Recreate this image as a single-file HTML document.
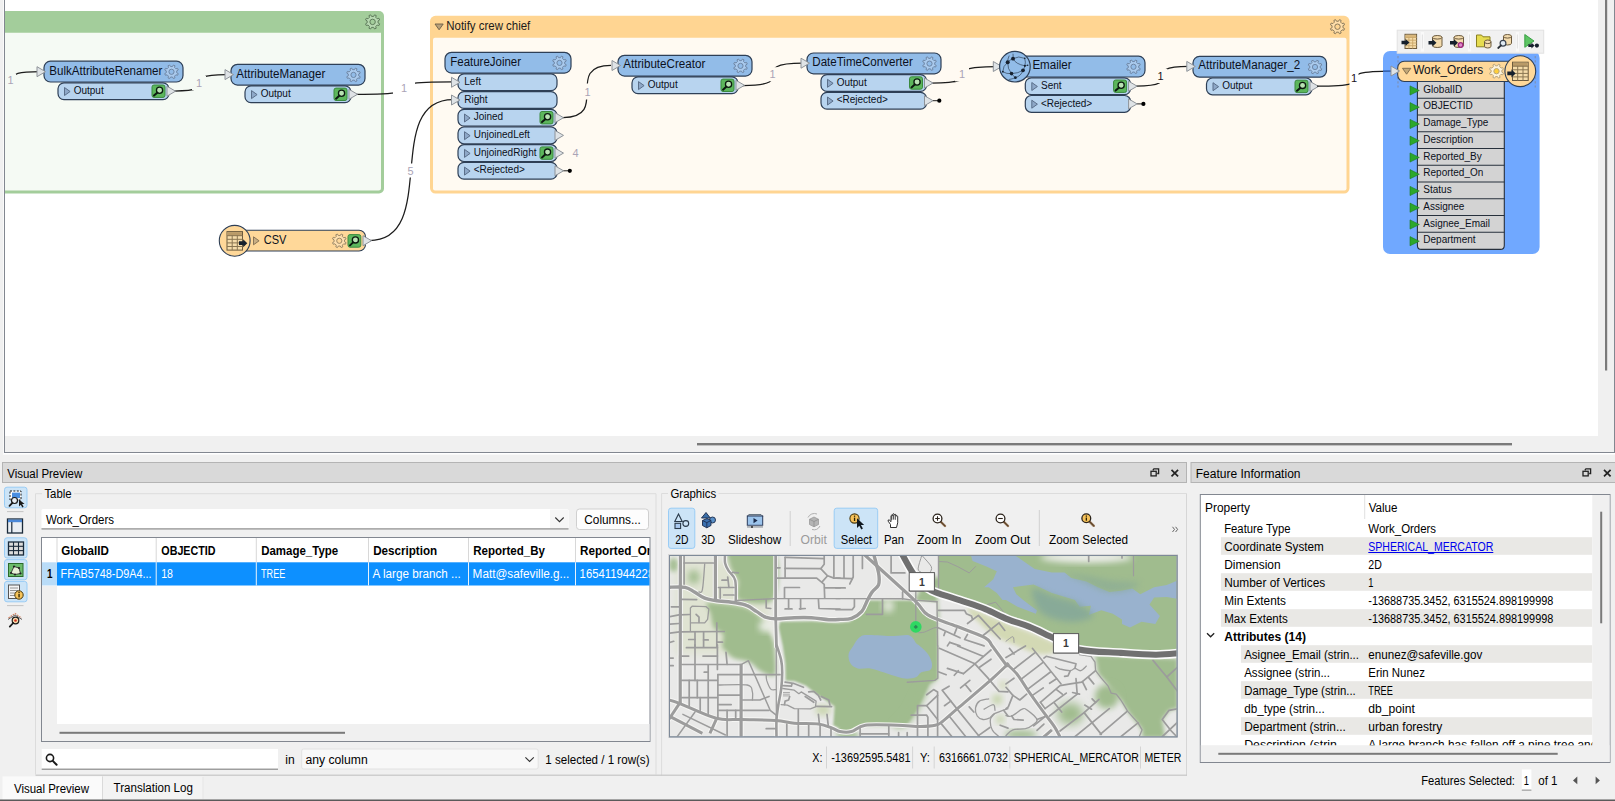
<!DOCTYPE html><html><head><meta charset="utf-8"><title>FME Workbench</title>
<style>html,body{margin:0;padding:0;background:#f0f0f0;overflow:hidden}svg{display:block}text{font-family:"Liberation Sans",sans-serif;white-space:pre}</style></head><body>
<svg width="1615" height="801" viewBox="0 0 1615 801" font-family='"Liberation Sans", sans-serif'>
<defs><clipPath id="cv"><rect x="5" y="0" width="1593" height="436"/></clipPath></defs>
<rect x="0" y="0" width="1615" height="801" fill="#f0f0f0"/>
<rect x="5" y="0" width="1593" height="436" fill="#ffffff"/>
<rect x="4" y="0" width="1" height="453" fill="#828790"/>
<rect x="4" y="452" width="1611" height="1" fill="#828790"/>
<rect x="1614" y="0" width="1" height="453" fill="#828790"/>
<rect x="3" y="453" width="1612" height="1.6" fill="#ffffff"/>
<rect x="3" y="0" width="1" height="454" fill="#fafafa"/>
<rect x="697" y="443" width="815" height="2.4" fill="#7a7a7a"/>
<rect x="1605" y="0" width="2.2" height="370.5" fill="#7a7a7a"/>
<g clip-path="url(#cv)">
<rect x="-20" y="11" width="404" height="182.5" rx="5" fill="#a3cd9b"/>
<path d="M5,32.7 H381 V188 Q381,190.5 378.5,190.5 H5Z" fill="#f5faf4"/>
<path d="M379.64,23.83 L378.94,25.52 L377.16,25.05 L375.75,26.46 L376.22,28.24 L374.53,28.94 L373.60,27.36 L371.60,27.36 L370.67,28.94 L368.98,28.24 L369.45,26.46 L368.04,25.05 L366.26,25.52 L365.56,23.83 L367.14,22.90 L367.14,20.90 L365.56,19.97 L366.26,18.28 L368.04,18.75 L369.45,17.34 L368.98,15.56 L370.67,14.86 L371.60,16.44 L373.60,16.44 L374.53,14.86 L376.22,15.56 L375.75,17.34 L377.16,18.75 L378.94,18.28 L379.64,19.97 L378.06,20.90 L378.06,22.90Z M375.30,21.90 A2.70,2.70 0 1 0 369.90,21.90 A2.70,2.70 0 1 0 375.30,21.90Z" fill="rgba(255,255,255,0.22)" fill-rule="evenodd" stroke="#5f7d5c" stroke-width="1" stroke-linejoin="round"/>
<rect x="430" y="15.8" width="919.5" height="177.7" rx="5.5" fill="#ffd592"/>
<rect x="433" y="37.8" width="913.5" height="152.8" rx="2" fill="#fffaf2"/>
<path d="M435,24 L443.2,24 L439.1,29.8Z" fill="#b8a07a" stroke="#6b5c45" stroke-width="0.9" stroke-linejoin="round"/>
<text x="446.3" y="30" font-size="12" fill="#1a1a1a" textLength="84" lengthAdjust="spacingAndGlyphs" >Notify crew chief</text>
<path d="M1344.54,28.63 L1343.84,30.32 L1342.06,29.85 L1340.65,31.26 L1341.12,33.04 L1339.43,33.74 L1338.50,32.16 L1336.50,32.16 L1335.57,33.74 L1333.88,33.04 L1334.35,31.26 L1332.94,29.85 L1331.16,30.32 L1330.46,28.63 L1332.04,27.70 L1332.04,25.70 L1330.46,24.77 L1331.16,23.08 L1332.94,23.55 L1334.35,22.14 L1333.88,20.36 L1335.57,19.66 L1336.50,21.24 L1338.50,21.24 L1339.43,19.66 L1341.12,20.36 L1340.65,22.14 L1342.06,23.55 L1343.84,23.08 L1344.54,24.77 L1342.96,25.70 L1342.96,27.70Z M1340.20,26.70 A2.70,2.70 0 1 0 1334.80,26.70 A2.70,2.70 0 1 0 1340.20,26.70Z" fill="rgba(255,255,255,0.22)" fill-rule="evenodd" stroke="#8a7a5c" stroke-width="1" stroke-linejoin="round"/>
<path d="M-14,82 C34.6,82 -8.6,71.7 40,71.7" stroke="#1c1c1c" stroke-width="1.25" fill="none"/>
<rect x="5.0" y="73.5" width="11" height="13" fill="#f5faf4"/>
<text x="10.5" y="84" font-size="11" fill="#aaa4b6" text-anchor="middle" >1</text>
<path d="M174,91 C226.0,91 174.0,74.6 226,74.6" stroke="#1c1c1c" stroke-width="1.25" fill="none"/>
<rect x="192.0" y="76.0" width="14" height="14" fill="#f5faf4"/>
<text x="199" y="87" font-size="11" fill="#aaa4b6" text-anchor="middle" >1</text>
<path d="M356,94.4 C453.0,94.4 356.0,81.8 453,81.8" stroke="#1c1c1c" stroke-width="1.25" fill="none"/>
<rect x="393.0" y="81.3" width="22" height="14" fill="#ffffff"/>
<text x="404" y="92.3" font-size="11" fill="#aaa4b6" text-anchor="middle" >1</text>
<path d="M369,240.6 C440.4,240.6 381.6,99.5 453,99.5" stroke="#1c1c1c" stroke-width="1.25" fill="none"/>
<rect x="404.6" y="163.5" width="12" height="14" fill="#ffffff"/>
<text x="410.6" y="174.5" font-size="11" fill="#aaa4b6" text-anchor="middle" >5</text>
<path d="M563,117.5 C611.0,117.5 563.0,65.4 611,65.4" stroke="#1c1c1c" stroke-width="1.25" fill="none"/>
<rect x="582.5" y="83.5" width="10" height="16" fill="#fffaf2"/>
<text x="587.5" y="95.5" font-size="11" fill="#aaa4b6" text-anchor="middle" >1</text>
<path d="M743,85.5 C803.0,85.5 743.0,63.2 803,63.2" stroke="#1c1c1c" stroke-width="1.25" fill="none"/>
<rect x="765.5" y="67.2" width="14" height="14" fill="#fffaf2"/>
<text x="772.5" y="78.2" font-size="11" fill="#aaa4b6" text-anchor="middle" >1</text>
<path d="M931,83 C996.0,83 931.0,66.5 996,66.5" stroke="#1c1c1c" stroke-width="1.25" fill="none"/>
<rect x="955.0" y="67.3" width="14" height="14" fill="#fffaf2"/>
<text x="962" y="78.3" font-size="11" fill="#aaa4b6" text-anchor="middle" >1</text>
<path d="M1136,86 C1189.0,86 1136.0,66.4 1189,66.4" stroke="#1c1c1c" stroke-width="1.25" fill="none"/>
<rect x="1153.5" y="69.0" width="14" height="14" fill="#fffaf2"/>
<text x="1160.5" y="80" font-size="11" fill="#1a1020" text-anchor="middle" >1</text>
<rect x="58" y="82.80" width="111" height="16.8" rx="6" fill="#b8d4ef" stroke="#2e3f56" stroke-width="1.2"/>
<path d="M64.5,87.5 L70.1,91.5 L64.5,95.5Z" fill="#8ea8c8" stroke="#5b6f8a" stroke-width="1" stroke-linejoin="round"/>
<text x="73.7" y="93.8" font-size="10" fill="#0b1020" >Output</text>
<rect x="152" y="85.0" width="13" height="12.4" rx="2" fill="#5cb65c" stroke="#3b8a3f" stroke-width="1"/>
<circle cx="159.54" cy="90.21" r="3.1" fill="#b9e3b4" stroke="#0c1a10" stroke-width="1.3"/>
<line x1="157.24" y1="92.71" x2="154.00" y2="95.60" stroke="#0c1a10" stroke-width="2" stroke-linecap="round"/>
<path d="M167,86.2 L175.5,91.2 L167,96.2Z" fill="#dfe3e6" stroke="#8e9399" stroke-width="1" stroke-linejoin="round"/>
<rect x="44" y="61.2" width="139" height="20.8" rx="6.5" fill="#92bce8" stroke="#2e3f56" stroke-width="1.2"/>
<text x="49.3" y="74.8" font-size="12" fill="#0b1020" textLength="113" lengthAdjust="spacingAndGlyphs" >BulkAttributeRenamer</text>
<path d="M178.25,73.65 L177.58,75.27 L175.88,74.82 L174.52,76.18 L174.97,77.88 L173.35,78.55 L172.46,77.03 L170.54,77.03 L169.65,78.55 L168.03,77.88 L168.48,76.18 L167.12,74.82 L165.42,75.27 L164.75,73.65 L166.27,72.76 L166.27,70.84 L164.75,69.95 L165.42,68.33 L167.12,68.78 L168.48,67.42 L168.03,65.72 L169.65,65.05 L170.54,66.57 L172.46,66.57 L173.35,65.05 L174.97,65.72 L174.52,67.42 L175.88,68.78 L177.58,68.33 L178.25,69.95 L176.73,70.84 L176.73,72.76Z M174.09,71.80 A2.59,2.59 0 1 0 168.91,71.80 A2.59,2.59 0 1 0 174.09,71.80Z" fill="rgba(255,255,255,0.22)" fill-rule="evenodd" stroke="#6f87a6" stroke-width="1" stroke-linejoin="round"/>
<path d="M37,66.7 L45.5,71.7 L37,76.7Z" fill="#dfe3e6" stroke="#8e9399" stroke-width="1" stroke-linejoin="round"/>
<rect x="245" y="85.90" width="106" height="16.8" rx="6" fill="#b8d4ef" stroke="#2e3f56" stroke-width="1.2"/>
<path d="M251.5,90.6 L257.1,94.6 L251.5,98.6Z" fill="#8ea8c8" stroke="#5b6f8a" stroke-width="1" stroke-linejoin="round"/>
<text x="260.7" y="96.9" font-size="10" fill="#0b1020" >Output</text>
<rect x="334" y="88.1" width="13" height="12.4" rx="2" fill="#5cb65c" stroke="#3b8a3f" stroke-width="1"/>
<circle cx="341.54" cy="93.31" r="3.1" fill="#b9e3b4" stroke="#0c1a10" stroke-width="1.3"/>
<line x1="339.24" y1="95.81" x2="336.00" y2="98.70" stroke="#0c1a10" stroke-width="2" stroke-linecap="round"/>
<path d="M349,89.3 L357.5,94.3 L349,99.3Z" fill="#dfe3e6" stroke="#8e9399" stroke-width="1" stroke-linejoin="round"/>
<rect x="231" y="64.3" width="134" height="20.8" rx="6.5" fill="#92bce8" stroke="#2e3f56" stroke-width="1.2"/>
<text x="236.3" y="77.8" font-size="12" fill="#0b1020" textLength="89" lengthAdjust="spacingAndGlyphs" >AttributeManager</text>
<path d="M360.25,76.75 L359.58,78.37 L357.88,77.92 L356.52,79.28 L356.97,80.98 L355.35,81.65 L354.46,80.13 L352.54,80.13 L351.65,81.65 L350.03,80.98 L350.48,79.28 L349.12,77.92 L347.42,78.37 L346.75,76.75 L348.27,75.86 L348.27,73.94 L346.75,73.05 L347.42,71.43 L349.12,71.88 L350.48,70.52 L350.03,68.82 L351.65,68.15 L352.54,69.67 L354.46,69.67 L355.35,68.15 L356.97,68.82 L356.52,70.52 L357.88,71.88 L359.58,71.43 L360.25,73.05 L358.73,73.94 L358.73,75.86Z M356.09,74.90 A2.59,2.59 0 1 0 350.91,74.90 A2.59,2.59 0 1 0 356.09,74.90Z" fill="rgba(255,255,255,0.22)" fill-rule="evenodd" stroke="#6f87a6" stroke-width="1" stroke-linejoin="round"/>
<path d="M225,69.6 L233.5,74.6 L225,79.6Z" fill="#dfe3e6" stroke="#8e9399" stroke-width="1" stroke-linejoin="round"/>
<rect x="458" y="73.90" width="99" height="16.8" rx="6" fill="#b8d4ef" stroke="#2e3f56" stroke-width="1.2"/>
<text x="464.3" y="85.0" font-size="10" fill="#0b1020" >Left</text>
<path d="M451.5,77.3 L460.0,82.3 L451.5,87.3Z" fill="#dfe3e6" stroke="#8e9399" stroke-width="1" stroke-linejoin="round"/>
<rect x="458" y="91.60" width="99" height="16.8" rx="6" fill="#b8d4ef" stroke="#2e3f56" stroke-width="1.2"/>
<text x="464.3" y="102.7" font-size="10" fill="#0b1020" >Right</text>
<path d="M451.5,95.0 L460.0,100.0 L451.5,105.0Z" fill="#dfe3e6" stroke="#8e9399" stroke-width="1" stroke-linejoin="round"/>
<rect x="458" y="109.30" width="99" height="16.8" rx="6" fill="#b8d4ef" stroke="#2e3f56" stroke-width="1.2"/>
<path d="M464.5,113.99999999999999 L470.1,117.99999999999999 L464.5,121.99999999999999Z" fill="#8ea8c8" stroke="#5b6f8a" stroke-width="1" stroke-linejoin="round"/>
<text x="473.7" y="120.3" font-size="10" fill="#0b1020" >Joined</text>
<rect x="540" y="111.49999999999999" width="13" height="12.4" rx="2" fill="#5cb65c" stroke="#3b8a3f" stroke-width="1"/>
<circle cx="547.54" cy="116.71" r="3.1" fill="#b9e3b4" stroke="#0c1a10" stroke-width="1.3"/>
<line x1="545.24" y1="119.21" x2="542.00" y2="122.10" stroke="#0c1a10" stroke-width="2" stroke-linecap="round"/>
<path d="M555,112.69999999999999 L563.5,117.69999999999999 L555,122.69999999999999Z" fill="#dfe3e6" stroke="#8e9399" stroke-width="1" stroke-linejoin="round"/>
<rect x="458" y="127.00" width="99" height="16.8" rx="6" fill="#b8d4ef" stroke="#2e3f56" stroke-width="1.2"/>
<path d="M464.5,131.7 L470.1,135.7 L464.5,139.7Z" fill="#8ea8c8" stroke="#5b6f8a" stroke-width="1" stroke-linejoin="round"/>
<text x="473.7" y="138.0" font-size="10" fill="#0b1020" >UnjoinedLeft</text>
<path d="M555,130.39999999999998 L563.5,135.39999999999998 L555,140.39999999999998Z" fill="#dfe3e6" stroke="#8e9399" stroke-width="1" stroke-linejoin="round"/>
<rect x="458" y="144.70" width="99" height="16.8" rx="6" fill="#b8d4ef" stroke="#2e3f56" stroke-width="1.2"/>
<path d="M464.5,149.4 L470.1,153.4 L464.5,157.4Z" fill="#8ea8c8" stroke="#5b6f8a" stroke-width="1" stroke-linejoin="round"/>
<text x="473.7" y="155.7" font-size="10" fill="#0b1020" >UnjoinedRight</text>
<rect x="540" y="146.89999999999998" width="13" height="12.4" rx="2" fill="#5cb65c" stroke="#3b8a3f" stroke-width="1"/>
<circle cx="547.54" cy="152.11" r="3.1" fill="#b9e3b4" stroke="#0c1a10" stroke-width="1.3"/>
<line x1="545.24" y1="154.61" x2="542.00" y2="157.50" stroke="#0c1a10" stroke-width="2" stroke-linecap="round"/>
<path d="M555,148.1 L563.5,153.1 L555,158.1Z" fill="#dfe3e6" stroke="#8e9399" stroke-width="1" stroke-linejoin="round"/>
<rect x="458" y="162.40" width="99" height="16.8" rx="6" fill="#b8d4ef" stroke="#2e3f56" stroke-width="1.2"/>
<path d="M464.5,167.1 L470.1,171.1 L464.5,175.1Z" fill="#8ea8c8" stroke="#5b6f8a" stroke-width="1" stroke-linejoin="round"/>
<text x="473.7" y="173.4" font-size="10" fill="#0b1020" >&lt;Rejected&gt;</text>
<path d="M555,165.79999999999998 L563.5,170.79999999999998 L555,175.79999999999998Z" fill="#dfe3e6" stroke="#8e9399" stroke-width="1" stroke-linejoin="round"/>
<line x1="563.5" y1="170.79999999999998" x2="568.5" y2="170.79999999999998" stroke="#222" stroke-width="1"/>
<circle cx="569.8" cy="170.79999999999998" r="2.1" fill="#000"/>
<rect x="445" y="52.3" width="126" height="20.8" rx="6.5" fill="#92bce8" stroke="#2e3f56" stroke-width="1.2"/>
<text x="450.3" y="65.9" font-size="12" fill="#0b1020" textLength="70.7" lengthAdjust="spacingAndGlyphs" >FeatureJoiner</text>
<path d="M566.25,64.75 L565.58,66.37 L563.88,65.92 L562.52,67.28 L562.97,68.98 L561.35,69.65 L560.46,68.13 L558.54,68.13 L557.65,69.65 L556.03,68.98 L556.48,67.28 L555.12,65.92 L553.42,66.37 L552.75,64.75 L554.27,63.86 L554.27,61.94 L552.75,61.05 L553.42,59.43 L555.12,59.88 L556.48,58.52 L556.03,56.82 L557.65,56.15 L558.54,57.67 L560.46,57.67 L561.35,56.15 L562.97,56.82 L562.52,58.52 L563.88,59.88 L565.58,59.43 L566.25,61.05 L564.73,61.94 L564.73,63.86Z M562.09,62.90 A2.59,2.59 0 1 0 556.91,62.90 A2.59,2.59 0 1 0 562.09,62.90Z" fill="rgba(255,255,255,0.22)" fill-rule="evenodd" stroke="#6f87a6" stroke-width="1" stroke-linejoin="round"/>
<text x="575.5" y="157.3" font-size="11" fill="#aaa4b6" text-anchor="middle" >4</text>
<rect x="632" y="76.90" width="106" height="16.8" rx="6" fill="#b8d4ef" stroke="#2e3f56" stroke-width="1.2"/>
<path d="M638.5,81.6 L644.1,85.6 L638.5,89.6Z" fill="#8ea8c8" stroke="#5b6f8a" stroke-width="1" stroke-linejoin="round"/>
<text x="647.7" y="87.9" font-size="10" fill="#0b1020" >Output</text>
<rect x="721" y="79.1" width="13" height="12.4" rx="2" fill="#5cb65c" stroke="#3b8a3f" stroke-width="1"/>
<circle cx="728.54" cy="84.31" r="3.1" fill="#b9e3b4" stroke="#0c1a10" stroke-width="1.3"/>
<line x1="726.24" y1="86.81" x2="723.00" y2="89.70" stroke="#0c1a10" stroke-width="2" stroke-linecap="round"/>
<path d="M736,80.3 L744.5,85.3 L736,90.3Z" fill="#dfe3e6" stroke="#8e9399" stroke-width="1" stroke-linejoin="round"/>
<rect x="618" y="55.3" width="134" height="20.8" rx="6.5" fill="#92bce8" stroke="#2e3f56" stroke-width="1.2"/>
<text x="623.3" y="67.8" font-size="12" fill="#0b1020" textLength="82" lengthAdjust="spacingAndGlyphs" >AttributeCreator</text>
<path d="M747.25,67.75 L746.58,69.37 L744.88,68.92 L743.52,70.28 L743.97,71.98 L742.35,72.65 L741.46,71.13 L739.54,71.13 L738.65,72.65 L737.03,71.98 L737.48,70.28 L736.12,68.92 L734.42,69.37 L733.75,67.75 L735.27,66.86 L735.27,64.94 L733.75,64.05 L734.42,62.43 L736.12,62.88 L737.48,61.52 L737.03,59.82 L738.65,59.15 L739.54,60.67 L741.46,60.67 L742.35,59.15 L743.97,59.82 L743.52,61.52 L744.88,62.88 L746.58,62.43 L747.25,64.05 L745.73,64.94 L745.73,66.86Z M743.09,65.90 A2.59,2.59 0 1 0 737.91,65.90 A2.59,2.59 0 1 0 743.09,65.90Z" fill="rgba(255,255,255,0.22)" fill-rule="evenodd" stroke="#6f87a6" stroke-width="1" stroke-linejoin="round"/>
<path d="M612,60.5 L620.5,65.5 L612,70.5Z" fill="#dfe3e6" stroke="#8e9399" stroke-width="1" stroke-linejoin="round"/>
<rect x="821" y="74.60" width="105.5" height="16.8" rx="6" fill="#b8d4ef" stroke="#2e3f56" stroke-width="1.2"/>
<path d="M827.5,79.3 L833.1,83.3 L827.5,87.3Z" fill="#8ea8c8" stroke="#5b6f8a" stroke-width="1" stroke-linejoin="round"/>
<text x="836.7" y="85.6" font-size="10" fill="#0b1020" >Output</text>
<rect x="909.5" y="76.8" width="13" height="12.4" rx="2" fill="#5cb65c" stroke="#3b8a3f" stroke-width="1"/>
<circle cx="917.04" cy="82.01" r="3.1" fill="#b9e3b4" stroke="#0c1a10" stroke-width="1.3"/>
<line x1="914.74" y1="84.51" x2="911.50" y2="87.40" stroke="#0c1a10" stroke-width="2" stroke-linecap="round"/>
<path d="M924.5,78.0 L933.0,83.0 L924.5,88.0Z" fill="#dfe3e6" stroke="#8e9399" stroke-width="1" stroke-linejoin="round"/>
<rect x="821" y="92.30" width="105.5" height="16.8" rx="6" fill="#b8d4ef" stroke="#2e3f56" stroke-width="1.2"/>
<path d="M827.5,97.0 L833.1,101.0 L827.5,105.0Z" fill="#8ea8c8" stroke="#5b6f8a" stroke-width="1" stroke-linejoin="round"/>
<text x="836.7" y="103.3" font-size="10" fill="#0b1020" >&lt;Rejected&gt;</text>
<path d="M924.5,95.7 L933.0,100.7 L924.5,105.7Z" fill="#dfe3e6" stroke="#8e9399" stroke-width="1" stroke-linejoin="round"/>
<line x1="933.0" y1="100.7" x2="938.0" y2="100.7" stroke="#222" stroke-width="1"/>
<circle cx="939.3" cy="100.7" r="2.1" fill="#000"/>
<rect x="807" y="53" width="134" height="20.8" rx="6.5" fill="#92bce8" stroke="#2e3f56" stroke-width="1.2"/>
<text x="812.3" y="65.9" font-size="12" fill="#0b1020" textLength="100.5" lengthAdjust="spacingAndGlyphs" >DateTimeConverter</text>
<path d="M936.25,65.45 L935.58,67.07 L933.88,66.62 L932.52,67.98 L932.97,69.68 L931.35,70.35 L930.46,68.83 L928.54,68.83 L927.65,70.35 L926.03,69.68 L926.48,67.98 L925.12,66.62 L923.42,67.07 L922.75,65.45 L924.27,64.56 L924.27,62.64 L922.75,61.75 L923.42,60.13 L925.12,60.58 L926.48,59.22 L926.03,57.52 L927.65,56.85 L928.54,58.37 L930.46,58.37 L931.35,56.85 L932.97,57.52 L932.52,59.22 L933.88,60.58 L935.58,60.13 L936.25,61.75 L934.73,62.64 L934.73,64.56Z M932.09,63.60 A2.59,2.59 0 1 0 926.91,63.60 A2.59,2.59 0 1 0 932.09,63.60Z" fill="rgba(255,255,255,0.22)" fill-rule="evenodd" stroke="#6f87a6" stroke-width="1" stroke-linejoin="round"/>
<path d="M801,58.2 L809.5,63.2 L801,68.2Z" fill="#dfe3e6" stroke="#8e9399" stroke-width="1" stroke-linejoin="round"/>
<path d="M993.3,61.5 L1001.8,66.5 L993.3,71.5Z" fill="#dfe3e6" stroke="#8e9399" stroke-width="1" stroke-linejoin="round"/>
<rect x="1025.3" y="77.80" width="105.3" height="16.8" rx="6" fill="#b8d4ef" stroke="#2e3f56" stroke-width="1.2"/>
<path d="M1031.8,82.5 L1037.3999999999999,86.5 L1031.8,90.5Z" fill="#8ea8c8" stroke="#5b6f8a" stroke-width="1" stroke-linejoin="round"/>
<text x="1041.0" y="88.8" font-size="10" fill="#0b1020" >Sent</text>
<rect x="1113.6" y="80.0" width="13" height="12.4" rx="2" fill="#5cb65c" stroke="#3b8a3f" stroke-width="1"/>
<circle cx="1121.14" cy="85.21" r="3.1" fill="#b9e3b4" stroke="#0c1a10" stroke-width="1.3"/>
<line x1="1118.84" y1="87.71" x2="1115.60" y2="90.60" stroke="#0c1a10" stroke-width="2" stroke-linecap="round"/>
<path d="M1128.6,81.2 L1137.1,86.2 L1128.6,91.2Z" fill="#dfe3e6" stroke="#8e9399" stroke-width="1" stroke-linejoin="round"/>
<rect x="1025.3" y="95.50" width="105.3" height="16.8" rx="6" fill="#b8d4ef" stroke="#2e3f56" stroke-width="1.2"/>
<path d="M1031.8,100.2 L1037.3999999999999,104.2 L1031.8,108.2Z" fill="#8ea8c8" stroke="#5b6f8a" stroke-width="1" stroke-linejoin="round"/>
<text x="1041.0" y="106.5" font-size="10" fill="#0b1020" >&lt;Rejected&gt;</text>
<path d="M1128.6,98.9 L1137.1,103.9 L1128.6,108.9Z" fill="#dfe3e6" stroke="#8e9399" stroke-width="1" stroke-linejoin="round"/>
<line x1="1137.1" y1="103.9" x2="1142.1" y2="103.9" stroke="#222" stroke-width="1"/>
<circle cx="1143.3999999999999" cy="103.9" r="2.1" fill="#000"/>
<rect x="1003" y="56.2" width="142" height="20.8" rx="6.5" fill="#92bce8" stroke="#2e3f56" stroke-width="1.2"/>
<circle cx="1014.9" cy="66.7" r="15.3" fill="#92bce8" stroke="#2e3f56" stroke-width="1.2"/>
<text x="1032.4" y="68.8" font-size="12" fill="#0b1020" textLength="39.3" lengthAdjust="spacingAndGlyphs" >Emailer</text>
<path d="M1140.25,68.65 L1139.58,70.27 L1137.88,69.82 L1136.52,71.18 L1136.97,72.88 L1135.35,73.55 L1134.46,72.03 L1132.54,72.03 L1131.65,73.55 L1130.03,72.88 L1130.48,71.18 L1129.12,69.82 L1127.42,70.27 L1126.75,68.65 L1128.27,67.76 L1128.27,65.84 L1126.75,64.95 L1127.42,63.33 L1129.12,63.78 L1130.48,62.42 L1130.03,60.72 L1131.65,60.05 L1132.54,61.57 L1134.46,61.57 L1135.35,60.05 L1136.97,60.72 L1136.52,62.42 L1137.88,63.78 L1139.58,63.33 L1140.25,64.95 L1138.73,65.84 L1138.73,67.76Z M1136.09,66.80 A2.59,2.59 0 1 0 1130.91,66.80 A2.59,2.59 0 1 0 1136.09,66.80Z" fill="rgba(255,255,255,0.22)" fill-rule="evenodd" stroke="#6f87a6" stroke-width="1" stroke-linejoin="round"/>
<path d="M1013.03,58.67 Q1018.53,55.52 1024.79,58.34" stroke="#1b2738" stroke-width="0.75" fill="none" opacity="0.75"/>
<path d="M1013.03,58.67 Q1015.64,64.13 1024.89,65.79" stroke="#1b2738" stroke-width="0.75" fill="none" opacity="0.75"/>
<path d="M1024.79,58.34 Q1025.88,62.40 1024.89,65.79" stroke="#1b2738" stroke-width="0.75" fill="none" opacity="0.75"/>
<path d="M1007.71,62.23 Q1009.99,59.74 1013.03,58.67" stroke="#1b2738" stroke-width="0.75" fill="none" opacity="0.75"/>
<path d="M1007.71,62.23 Q1002.76,66.03 1002.83,71.72" stroke="#1b2738" stroke-width="0.75" fill="none" opacity="0.75"/>
<path d="M1007.71,62.23 Q1007.43,68.87 1011.51,73.62" stroke="#1b2738" stroke-width="0.75" fill="none" opacity="0.75"/>
<path d="M1002.83,71.72 Q1006.55,74.09 1011.51,73.62" stroke="#1b2738" stroke-width="0.75" fill="none" opacity="0.75"/>
<path d="M1011.51,73.62 Q1018.29,73.38 1022.99,70.30" stroke="#1b2738" stroke-width="0.75" fill="none" opacity="0.75"/>
<path d="M1011.51,73.62 Q1013.07,75.87 1015.40,77.65" stroke="#1b2738" stroke-width="0.75" fill="none" opacity="0.75"/>
<path d="M1015.40,77.65 Q1021.09,76.11 1022.99,70.30" stroke="#1b2738" stroke-width="0.75" fill="none" opacity="0.75"/>
<path d="M1022.99,70.30 Q1024.41,68.28 1024.89,65.79" stroke="#1b2738" stroke-width="0.75" fill="none" opacity="0.75"/>
<path d="M1013.03,53.69 Q1013.22,55.95 1013.03,58.67" stroke="#1b2738" stroke-width="0.75" fill="none" opacity="0.75"/>
<path d="M1009.23,55.59 Q1007.62,58.91 1007.71,62.23" stroke="#1b2738" stroke-width="0.75" fill="none" opacity="0.75"/>
<path d="M1008.76,79.55 Q1012.08,79.07 1015.40,77.65" stroke="#1b2738" stroke-width="0.75" fill="none" opacity="0.75"/>
<path d="M1024.89,65.79 Q1026.31,65.36 1027.73,65.31" stroke="#1b2738" stroke-width="0.75" fill="none" opacity="0.75"/>
<circle cx="1013.03" cy="58.67" r="1.95" fill="#17212f"/>
<circle cx="1007.71" cy="62.23" r="2.0" fill="#17212f"/>
<circle cx="1022.99" cy="70.30" r="1.9" fill="#17212f"/>
<circle cx="1011.51" cy="73.62" r="1.8" fill="#17212f"/>
<circle cx="1015.40" cy="77.65" r="1.4" fill="#17212f"/>
<circle cx="1024.89" cy="65.79" r="1.1" fill="#17212f"/>
<circle cx="1027.73" cy="65.31" r="0.7" fill="#17212f"/>
<circle cx="1024.79" cy="58.34" r="0.8" fill="#17212f"/>
<circle cx="1002.83" cy="71.72" r="0.9" fill="#17212f"/>
<rect x="1206.5" y="78.00" width="105.5" height="16.8" rx="6" fill="#b8d4ef" stroke="#2e3f56" stroke-width="1.2"/>
<path d="M1213.0,82.7 L1218.6,86.7 L1213.0,90.7Z" fill="#8ea8c8" stroke="#5b6f8a" stroke-width="1" stroke-linejoin="round"/>
<text x="1222.2" y="89.0" font-size="10" fill="#0b1020" >Output</text>
<rect x="1295.0" y="80.2" width="13" height="12.4" rx="2" fill="#5cb65c" stroke="#3b8a3f" stroke-width="1"/>
<circle cx="1302.54" cy="85.41" r="3.1" fill="#b9e3b4" stroke="#0c1a10" stroke-width="1.3"/>
<line x1="1300.24" y1="87.91" x2="1297.00" y2="90.80" stroke="#0c1a10" stroke-width="2" stroke-linecap="round"/>
<path d="M1310.0,81.4 L1318.5,86.4 L1310.0,91.4Z" fill="#dfe3e6" stroke="#8e9399" stroke-width="1" stroke-linejoin="round"/>
<rect x="1193" y="56.4" width="133.5" height="20.8" rx="6.5" fill="#92bce8" stroke="#2e3f56" stroke-width="1.2"/>
<text x="1198.3" y="68.7" font-size="12" fill="#0b1020" textLength="102" lengthAdjust="spacingAndGlyphs" >AttributeManager_2</text>
<path d="M1321.75,68.85 L1321.08,70.47 L1319.38,70.02 L1318.02,71.38 L1318.47,73.08 L1316.85,73.75 L1315.96,72.23 L1314.04,72.23 L1313.15,73.75 L1311.53,73.08 L1311.98,71.38 L1310.62,70.02 L1308.92,70.47 L1308.25,68.85 L1309.77,67.96 L1309.77,66.04 L1308.25,65.15 L1308.92,63.53 L1310.62,63.98 L1311.98,62.62 L1311.53,60.92 L1313.15,60.25 L1314.04,61.77 L1315.96,61.77 L1316.85,60.25 L1318.47,60.92 L1318.02,62.62 L1319.38,63.98 L1321.08,63.53 L1321.75,65.15 L1320.23,66.04 L1320.23,67.96Z M1317.59,67.00 A2.59,2.59 0 1 0 1312.41,67.00 A2.59,2.59 0 1 0 1317.59,67.00Z" fill="rgba(255,255,255,0.22)" fill-rule="evenodd" stroke="#6f87a6" stroke-width="1" stroke-linejoin="round"/>
<path d="M1186.8,61.400000000000006 L1195.3,66.4 L1186.8,71.4Z" fill="#dfe3e6" stroke="#8e9399" stroke-width="1" stroke-linejoin="round"/>
<rect x="228" y="230.3" width="137.5" height="20.7" rx="6.5" fill="#ffd899" stroke="#2e3f56" stroke-width="1.1"/>
<circle cx="234.7" cy="240.8" r="15.4" fill="#ffd899" stroke="#2e3f56" stroke-width="1.1"/>
<rect x="227" y="231.6" width="15.5" height="18.5" fill="#f5dcaa" stroke="#6b5a3e" stroke-width="1"/>
<rect x="227.5" y="232.1" width="14.5" height="3.7" fill="#b99a68"/>
<line x1="232.2" y1="235.3" x2="232.2" y2="250.1" stroke="#8a7652" stroke-width="1.0"/>
<line x1="237.3" y1="235.3" x2="237.3" y2="250.1" stroke="#8a7652" stroke-width="1.0"/>
<line x1="227" y1="235.7" x2="242.5" y2="235.7" stroke="#8a7652" stroke-width="1.0"/>
<line x1="227" y1="239.3" x2="242.5" y2="239.3" stroke="#8a7652" stroke-width="1.0"/>
<line x1="227" y1="242.9" x2="242.5" y2="242.9" stroke="#8a7652" stroke-width="1.0"/>
<line x1="227" y1="246.5" x2="242.5" y2="246.5" stroke="#8a7652" stroke-width="1.0"/>
<path d="M239,241.296 H243.15 V239.16799999999998 L247.3,243.2 L243.15,247.232 V245.10399999999998 H239Z" fill="#16202c"/>
<path d="M253.5,236.8 L259.1,240.8 L253.5,244.8Z" fill="#c9ae83" stroke="#8a7556" stroke-width="1" stroke-linejoin="round"/>
<text x="263.7" y="243.5" font-size="12" fill="#0b1020" textLength="22.7" lengthAdjust="spacingAndGlyphs" >CSV</text>
<path d="M346.05,242.65 L345.38,244.27 L343.68,243.82 L342.32,245.18 L342.77,246.88 L341.15,247.55 L340.26,246.03 L338.34,246.03 L337.45,247.55 L335.83,246.88 L336.28,245.18 L334.92,243.82 L333.22,244.27 L332.55,242.65 L334.07,241.76 L334.07,239.84 L332.55,238.95 L333.22,237.33 L334.92,237.78 L336.28,236.42 L335.83,234.72 L337.45,234.05 L338.34,235.57 L340.26,235.57 L341.15,234.05 L342.77,234.72 L342.32,236.42 L343.68,237.78 L345.38,237.33 L346.05,238.95 L344.53,239.84 L344.53,241.76Z M341.89,240.80 A2.59,2.59 0 1 0 336.71,240.80 A2.59,2.59 0 1 0 341.89,240.80Z" fill="rgba(255,255,255,0.22)" fill-rule="evenodd" stroke="#9a8868" stroke-width="1" stroke-linejoin="round"/>
<rect x="348" y="234.6" width="12.8" height="12.6" rx="2" fill="#5cb65c" stroke="#3b8a3f" stroke-width="1"/>
<circle cx="355.42" cy="239.89" r="3.1" fill="#b9e3b4" stroke="#0c1a10" stroke-width="1.3"/>
<line x1="353.12" y1="242.39" x2="350.00" y2="245.40" stroke="#0c1a10" stroke-width="2" stroke-linecap="round"/>
<path d="M363,235.7 L371.5,240.7 L363,245.7Z" fill="#dfe3e6" stroke="#8e9399" stroke-width="1" stroke-linejoin="round"/>
<rect x="1383" y="51" width="156.6" height="203" rx="7" fill="#70a8ff"/>
<path d="M1317,86.2 C1394.0,86.2 1317.0,71 1394,71" stroke="#1c1c1c" stroke-width="1.25" fill="none"/>
<rect x="1349.5" y="71.0" width="9" height="14" fill="#ffffff"/>
<text x="1354" y="82" font-size="11" fill="#1a1020" text-anchor="middle" >1</text>
<line x1="1383" y1="71.1" x2="1391.5" y2="71" stroke="#3f78d8" stroke-width="1.5"/>
<line x1="1398" y1="56" x2="1398" y2="87.5" stroke="#7f8aa0" stroke-opacity="0.65" stroke-width="1.4" stroke-dasharray="2.2,2"/>
<line x1="1535.3" y1="56" x2="1535.3" y2="87.5" stroke="#7f8aa0" stroke-opacity="0.65" stroke-width="1.4" stroke-dasharray="2.2,2"/>
<path d="M1417.4,81.5 H1504.3 V245.4 Q1504.3,249.4 1500.3,249.4 H1421.4 Q1417.4,249.4 1417.4,245.4Z" fill="#d3d3d3" stroke="#27303c" stroke-width="1.1"/>
<path d="M1410,85.88 L1419.3,90.47 L1410,95.07Z" fill="#2ca82c" stroke="#1d7a1d" stroke-width="0.6"/>
<text x="1423.3" y="92.7" font-size="10" fill="#0b1020" >GlobalID</text>
<line x1="1417.4" y1="98.25" x2="1504.3" y2="98.25" stroke="#27303c" stroke-width="1.1"/>
<path d="M1410,102.62 L1419.3,107.22 L1410,111.82Z" fill="#2ca82c" stroke="#1d7a1d" stroke-width="0.6"/>
<text x="1423.3" y="109.4" font-size="10" fill="#0b1020" >OBJECTID</text>
<line x1="1417.4" y1="115.00" x2="1504.3" y2="115.00" stroke="#27303c" stroke-width="1.1"/>
<path d="M1410,119.38 L1419.3,123.97 L1410,128.57Z" fill="#2ca82c" stroke="#1d7a1d" stroke-width="0.6"/>
<text x="1423.3" y="126.2" font-size="10" fill="#0b1020" >Damage_Type</text>
<line x1="1417.4" y1="131.75" x2="1504.3" y2="131.75" stroke="#27303c" stroke-width="1.1"/>
<path d="M1410,136.12 L1419.3,140.72 L1410,145.32Z" fill="#2ca82c" stroke="#1d7a1d" stroke-width="0.6"/>
<text x="1423.3" y="142.9" font-size="10" fill="#0b1020" >Description</text>
<line x1="1417.4" y1="148.50" x2="1504.3" y2="148.50" stroke="#27303c" stroke-width="1.1"/>
<path d="M1410,152.88 L1419.3,157.47 L1410,162.07Z" fill="#2ca82c" stroke="#1d7a1d" stroke-width="0.6"/>
<text x="1423.3" y="159.7" font-size="10" fill="#0b1020" >Reported_By</text>
<line x1="1417.4" y1="165.25" x2="1504.3" y2="165.25" stroke="#27303c" stroke-width="1.1"/>
<path d="M1410,169.62 L1419.3,174.22 L1410,178.82Z" fill="#2ca82c" stroke="#1d7a1d" stroke-width="0.6"/>
<text x="1423.3" y="176.4" font-size="10" fill="#0b1020" >Reported_On</text>
<line x1="1417.4" y1="182.00" x2="1504.3" y2="182.00" stroke="#27303c" stroke-width="1.1"/>
<path d="M1410,186.38 L1419.3,190.97 L1410,195.57Z" fill="#2ca82c" stroke="#1d7a1d" stroke-width="0.6"/>
<text x="1423.3" y="193.2" font-size="10" fill="#0b1020" >Status</text>
<line x1="1417.4" y1="198.75" x2="1504.3" y2="198.75" stroke="#27303c" stroke-width="1.1"/>
<path d="M1410,203.12 L1419.3,207.72 L1410,212.32Z" fill="#2ca82c" stroke="#1d7a1d" stroke-width="0.6"/>
<text x="1423.3" y="209.9" font-size="10" fill="#0b1020" >Assignee</text>
<line x1="1417.4" y1="215.50" x2="1504.3" y2="215.50" stroke="#27303c" stroke-width="1.1"/>
<path d="M1410,219.88 L1419.3,224.47 L1410,229.07Z" fill="#2ca82c" stroke="#1d7a1d" stroke-width="0.6"/>
<text x="1423.3" y="226.7" font-size="10" fill="#0b1020" >Asignee_Email</text>
<line x1="1417.4" y1="232.25" x2="1504.3" y2="232.25" stroke="#27303c" stroke-width="1.1"/>
<path d="M1410,236.62 L1419.3,241.22 L1410,245.82Z" fill="#2ca82c" stroke="#1d7a1d" stroke-width="0.6"/>
<text x="1423.3" y="243.4" font-size="10" fill="#0b1020" >Department</text>
<rect x="1397.7" y="61.2" width="128" height="20.3" rx="6.5" fill="#ffd899" stroke="#2e3f56" stroke-width="1.1"/>
<circle cx="1520.3" cy="71.2" r="15.4" fill="#ffd899" stroke="#2e3f56" stroke-width="1.1"/>
<rect x="1512.5" y="62.2" width="15.7" height="18.3" fill="#f5dcaa" stroke="#6b5a3e" stroke-width="1"/>
<rect x="1513.0" y="62.7" width="14.7" height="3.7" fill="#b99a68"/>
<line x1="1517.7" y1="65.9" x2="1517.7" y2="80.5" stroke="#8a7652" stroke-width="1.0"/>
<line x1="1523.0" y1="65.9" x2="1523.0" y2="80.5" stroke="#8a7652" stroke-width="1.0"/>
<line x1="1512.5" y1="66.2" x2="1528.2" y2="66.2" stroke="#8a7652" stroke-width="1.0"/>
<line x1="1512.5" y1="69.8" x2="1528.2" y2="69.8" stroke="#8a7652" stroke-width="1.0"/>
<line x1="1512.5" y1="73.4" x2="1528.2" y2="73.4" stroke="#8a7652" stroke-width="1.0"/>
<line x1="1512.5" y1="76.9" x2="1528.2" y2="76.9" stroke="#8a7652" stroke-width="1.0"/>
<path d="M1507.3,71.49600000000001 H1511.45 V69.36800000000001 L1515.6,73.4 L1511.45,77.432 V75.304 H1507.3Z" fill="#16202c"/>
<path d="M1402.5,68.3 L1410.8,68.3 L1406.6,74.2Z" fill="#c3a878" stroke="#7c6848" stroke-width="0.9" stroke-linejoin="round"/>
<text x="1413.2" y="73.7" font-size="12" fill="#0b1020" textLength="70" lengthAdjust="spacingAndGlyphs" >Work_Orders</text>
<path d="M1503.44,73.10 L1502.75,74.77 L1501.00,74.31 L1499.61,75.70 L1500.07,77.45 L1498.40,78.14 L1497.48,76.58 L1495.52,76.58 L1494.60,78.14 L1492.93,77.45 L1493.39,75.70 L1492.00,74.31 L1490.25,74.77 L1489.56,73.10 L1491.12,72.18 L1491.12,70.22 L1489.56,69.30 L1490.25,67.63 L1492.00,68.09 L1493.39,66.70 L1492.93,64.95 L1494.60,64.26 L1495.52,65.82 L1497.48,65.82 L1498.40,64.26 L1500.07,64.95 L1499.61,66.70 L1501.00,68.09 L1502.75,67.63 L1503.44,69.30 L1501.88,70.22 L1501.88,72.18Z" fill="#fdf3dc" stroke="#b9a57c" stroke-width="1" stroke-linejoin="round"/>
<circle cx="1496.5" cy="71.2" r="2.66" fill="#ffcf3a" stroke="#b9a57c" stroke-width="1"/>
<path d="M1391,66 L1399.5,71 L1391,76Z" fill="#dfe3e6" stroke="#8e9399" stroke-width="1" stroke-linejoin="round"/>
<rect x="1397.2" y="30.2" width="146.5" height="23" fill="#f1f1f1" stroke="#e2e2e2" stroke-width="1"/>
<rect x="1420.8000000000002" y="32" width="3.2" height="19.5" fill="#f9f9f9"/><line x1="1422.4" y1="34.5" x2="1422.4" y2="48.5" stroke="#e1e1e1" stroke-width="1"/>
<rect x="1467.9" y="32" width="3.2" height="19.5" fill="#f9f9f9"/><line x1="1469.5" y1="34.5" x2="1469.5" y2="48.5" stroke="#e1e1e1" stroke-width="1"/>
<rect x="1515.8000000000002" y="32" width="3.2" height="19.5" fill="#f9f9f9"/><line x1="1517.4" y1="34.5" x2="1517.4" y2="48.5" stroke="#e1e1e1" stroke-width="1"/>
<rect x="1405" y="34.3" width="11.6" height="14.2" fill="#f5dcaa" stroke="#6b5a3e" stroke-width="1"/>
<rect x="1405.5" y="34.8" width="10.6" height="2.8" fill="#d9b77c"/>
<line x1="1408.9" y1="37.1" x2="1408.9" y2="48.5" stroke="#c9a66a" stroke-width="0.9"/>
<line x1="1412.7" y1="37.1" x2="1412.7" y2="48.5" stroke="#c9a66a" stroke-width="0.9"/>
<line x1="1405" y1="37.4" x2="1416.6" y2="37.4" stroke="#c9a66a" stroke-width="0.9"/>
<line x1="1405" y1="40.2" x2="1416.6" y2="40.2" stroke="#c9a66a" stroke-width="0.9"/>
<line x1="1405" y1="43.0" x2="1416.6" y2="43.0" stroke="#c9a66a" stroke-width="0.9"/>
<line x1="1405" y1="45.7" x2="1416.6" y2="45.7" stroke="#c9a66a" stroke-width="0.9"/>
<path d="M1401.5,40.8 H1405.5 V38.9 L1409.5,42.5 L1405.5,46.1 V44.2 H1401.5Z" fill="#16202c"/>
<path d="M1432.5,37.3 V45.7 A4.75,1.8 0 0 0 1442.0,45.7 V37.3 A4.75,1.8 0 0 0 1432.5,37.3 A4.75,1.8 0 0 0 1442.0,37.3" fill="#f4dcae" stroke="#6b5a3e" stroke-width="1"/>
<path d="M1428.5,41.099999999999994 H1432.5 V39.199999999999996 L1436.5,42.8 L1432.5,46.4 V44.5 H1428.5Z" fill="#16202c"/>
<path d="M1454,37.3 V45.7 A4.75,1.8 0 0 0 1463.5,45.7 V37.3 A4.75,1.8 0 0 0 1454,37.3 A4.75,1.8 0 0 0 1463.5,37.3" fill="#f4dcae" stroke="#6b5a3e" stroke-width="1"/>
<path d="M1450,41.099999999999994 H1454.0 V39.199999999999996 L1458,42.8 L1454.0,46.4 V44.5 H1450Z" fill="#16202c"/>
<circle cx="1460.6" cy="45" r="2.3" fill="#dc8cc8" stroke="#a02880" stroke-width="1.3"/>
<path d="M1476.5,35 h5 l1.5,1.8 h7 v10 h-13.5z" fill="#e6dc50" stroke="#8a8020" stroke-width="1"/>
<path d="M1484.5,41.8 V46.2 A3.25,1.8 0 0 0 1491.0,46.2 V41.8 A3.25,1.8 0 0 0 1484.5,41.8 A3.25,1.8 0 0 0 1491.0,41.8" fill="#f4dcae" stroke="#6b5a3e" stroke-width="1"/>
<path d="M1503.5,36.3 V43.2 A4.0,1.8 0 0 0 1511.5,43.2 V36.3 A4.0,1.8 0 0 0 1503.5,36.3 A4.0,1.8 0 0 0 1511.5,36.3" fill="#f4dcae" stroke="#6b5a3e" stroke-width="1"/>
<circle cx="1503" cy="43.2" r="2.9" fill="#dfe9f2" stroke="#3a4350" stroke-width="1.2"/>
<line x1="1501" y1="45.3" x2="1498.2" y2="48" stroke="#2a3038" stroke-width="1.8" stroke-linecap="round"/>
<path d="M1524.8,34.5 L1534,41 L1524.8,47.3Z" fill="#5cc463" stroke="#2f9a3a" stroke-width="0.9"/>
<path d="M1528.3,44.24 H1531.45 V42.72 L1534.6,45.6 L1531.45,48.480000000000004 V46.96 H1528.3Z" fill="#16202c"/>
<circle cx="1536.9" cy="45.6" r="2.1" fill="#16202c"/>
</g>
<rect x="2.5" y="462.5" width="1184" height="20" fill="#d9d9d9" stroke="#b4b4b4" stroke-width="1"/>
<text x="7.2" y="477.5" font-size="12" fill="#000" textLength="75" lengthAdjust="spacingAndGlyphs" >Visual Preview</text>
<path d="M1153.3,468.9 h5.3 v4.6 h-1.4 M1153.3,468.9 v1.6" fill="none" stroke="#222" stroke-width="1.3"/>
<rect x="1151" y="471.3" width="5.2" height="4.6" fill="none" stroke="#222" stroke-width="1.3"/>
<path d="M1171.5,469.8 l6.6,6.6 M1178.1,469.8 l-6.6,6.6" stroke="#222" stroke-width="1.7"/>
<rect x="4.5" y="487.2" width="22.5" height="20.6" rx="2.5" fill="#cce4f7" stroke="#99ccf5" stroke-width="1"/>
<rect x="10" y="491" width="11" height="9" fill="#ffffff" stroke="#1a1a1a" stroke-width="1" stroke-dasharray="2,1.4"/><rect x="12" y="492.6" width="8" height="5.5" fill="#4a8ee0"/>
<circle cx="14.5" cy="500.5" r="3" fill="#e8eef4" stroke="#1a1a1a" stroke-width="1.2"/>
<line x1="12.4" y1="502.8" x2="9.5" y2="505.8" stroke="#1a1a1a" stroke-width="1.8" stroke-linecap="round"/>
<path d="M19,499.5 v7 l1.8,-1.8 l1.5,2.8 l1.3,-0.7 l-1.5,-2.7 h2.5z" fill="#1a1a1a"/>
<rect x="7" y="511.1" width="16.5" height="1" fill="#c4c4c4"/>
<rect x="7.5" y="519" width="15" height="14" fill="#e9eef3" stroke="#1a2a3a" stroke-width="1.3"/>
<rect x="8" y="519.6" width="14" height="2.6" fill="#4a88d8"/>
<line x1="11.8" y1="522" x2="11.8" y2="533" stroke="#1a2a3a" stroke-width="1.2"/>
<rect x="4.5" y="537.8" width="22.5" height="20.2" rx="2.5" fill="#cce4f7" stroke="#99ccf5" stroke-width="1"/>
<rect x="8.5" y="542" width="15" height="13" fill="#dcdcdc" stroke="#1a2a3a" stroke-width="1.3"/>
<line x1="13.5" y1="542" x2="13.5" y2="555" stroke="#1a2a3a" stroke-width="1.1"/>
<line x1="18.5" y1="542" x2="18.5" y2="555" stroke="#1a2a3a" stroke-width="1.1"/>
<line x1="8.5" y1="546.3" x2="23.5" y2="546.3" stroke="#1a2a3a" stroke-width="1.1"/>
<line x1="8.5" y1="550.6" x2="23.5" y2="550.6" stroke="#1a2a3a" stroke-width="1.1"/>
<rect x="4.5" y="559.6" width="22.5" height="20.2" rx="2.5" fill="#cce4f7" stroke="#99ccf5" stroke-width="1"/>
<rect x="8.5" y="563.5" width="14.5" height="13" fill="#6cbc6c" stroke="#2a6a2a" stroke-width="1"/>
<path d="M11,573 L14,566.5 L19,568 L20.5,573.5 L15,574.5Z" fill="#e8f0d8" stroke="#333" stroke-width="0.9"/>
<circle cx="11" cy="573" r="1.1" fill="#222"/>
<circle cx="14" cy="566.5" r="1.1" fill="#222"/>
<circle cx="19" cy="568" r="1.1" fill="#222"/>
<circle cx="20.5" cy="573.5" r="1.1" fill="#222"/>
<circle cx="15" cy="574.5" r="1.1" fill="#222"/>
<rect x="4.5" y="581.4" width="22.5" height="20.4" rx="2.5" fill="#cce4f7" stroke="#99ccf5" stroke-width="1"/>
<rect x="8.5" y="585" width="11" height="13.5" fill="#f4f4f4" stroke="#555" stroke-width="1"/>
<line x1="10" y1="588" x2="18" y2="588" stroke="#888" stroke-width="0.9"/>
<line x1="10" y1="590.5" x2="18" y2="590.5" stroke="#888" stroke-width="0.9"/>
<line x1="10" y1="593" x2="18" y2="593" stroke="#888" stroke-width="0.9"/>
<line x1="10" y1="595.5" x2="18" y2="595.5" stroke="#888" stroke-width="0.9"/>
<circle cx="19" cy="595" r="4.2" fill="#f7c45a" stroke="#4a3a10" stroke-width="1"/>
<rect x="18.4" y="594" width="1.3" height="3.4" fill="#2a2000"/><rect x="18.4" y="592" width="1.3" height="1.2" fill="#2a2000"/>
<rect x="7" y="605.1" width="16.5" height="1" fill="#c4c4c4"/>
<path d="M8.5,618 L15,613.5 L21.5,618" fill="none" stroke="#d08060" stroke-width="1.2" stroke-dasharray="1.6,1"/>
<path d="M8,619.5 L15,615 L22,619.5" fill="none" stroke="#555" stroke-width="0.9"/>
<circle cx="15.5" cy="620.5" r="3.3" fill="#f5d9a8" stroke="#1a1a1a" stroke-width="1.2"/>
<circle cx="15.5" cy="620.5" r="1.3" fill="#d03020"/>
<line x1="13.2" y1="623" x2="9.8" y2="626.6" stroke="#1a1a1a" stroke-width="1.8" stroke-linecap="round"/>
<rect x="35.0" y="493.7" width="1" height="280.8" fill="#dcdcdc"/>
<rect x="35.5" y="493.2" width="6.5" height="1" fill="#dcdcdc"/>
<rect x="74" y="493.2" width="582" height="1" fill="#dcdcdc"/>
<rect x="655.5" y="493.7" width="1" height="280.8" fill="#dcdcdc"/>
<text x="44.4" y="497.8" font-size="12" fill="#000" textLength="27.2" lengthAdjust="spacingAndGlyphs" >Table</text>
<rect x="41.5" y="509" width="527" height="20" rx="1.5" fill="#ffffff"/>
<rect x="550" y="509.5" width="18" height="19" fill="#f6f6f6"/>
<rect x="41.5" y="528.3" width="527" height="1.2" fill="#8a8a8a"/>
<text x="46" y="523.6" font-size="12" fill="#000" textLength="68" lengthAdjust="spacingAndGlyphs" >Work_Orders</text>
<path d="M555.3,517.5 L559.5,521.7 L563.7,517.5" fill="none" stroke="#333" stroke-width="1.1"/>
<rect x="576.5" y="509" width="72" height="20.5" rx="3" fill="#fdfdfd" stroke="#d0d0d0" stroke-width="1"/>
<text x="584.3" y="524" font-size="12" fill="#000" textLength="56.5" lengthAdjust="spacingAndGlyphs" >Columns...</text>
<rect x="41.5" y="537.5" width="608.5" height="204" fill="#ffffff" stroke="#828790" stroke-width="1"/>
<rect x="42" y="586" width="15" height="138" fill="#f0f0f0"/>
<rect x="42" y="724" width="607.5" height="17" fill="#f0f0f0"/>
<rect x="59.5" y="731.8" width="285.5" height="2" fill="#7a7a7a"/>
<clipPath id="tb"><rect x="42" y="538" width="607.5" height="203"/></clipPath><g clip-path="url(#tb)">
<rect x="42" y="562.3" width="15" height="23.2" fill="#b9dcf8"/>
<rect x="57" y="562.3" width="593" height="23.2" fill="#0d90ff"/>
<rect x="56.5" y="538" width="1" height="24.299999999999955" fill="#d8d8d8"/>
<rect x="155.7" y="538" width="1" height="24.299999999999955" fill="#d8d8d8"/>
<rect x="255.8" y="538" width="1" height="24.299999999999955" fill="#d8d8d8"/>
<rect x="368.0" y="538" width="1" height="24.299999999999955" fill="#d8d8d8"/>
<rect x="468.0" y="538" width="1" height="24.299999999999955" fill="#d8d8d8"/>
<rect x="575.0" y="538" width="1" height="24.299999999999955" fill="#d8d8d8"/>
<rect x="155.7" y="562.3" width="1" height="23.200000000000045" fill="#e8f2fb"/>
<rect x="255.8" y="562.3" width="1" height="23.200000000000045" fill="#e8f2fb"/>
<rect x="368.0" y="562.3" width="1" height="23.200000000000045" fill="#e8f2fb"/>
<rect x="468.0" y="562.3" width="1" height="23.200000000000045" fill="#e8f2fb"/>
<rect x="575.0" y="562.3" width="1" height="23.200000000000045" fill="#e8f2fb"/>
<text x="61.2" y="554.7" font-size="12" fill="#000" textLength="47.6" lengthAdjust="spacingAndGlyphs" font-weight="bold" >GlobalID</text>
<text x="161.3" y="554.7" font-size="12" fill="#000" textLength="54.3" lengthAdjust="spacingAndGlyphs" font-weight="bold" >OBJECTID</text>
<text x="261.2" y="554.7" font-size="12" fill="#000" textLength="77" lengthAdjust="spacingAndGlyphs" font-weight="bold" >Damage_Type</text>
<text x="373.2" y="554.7" font-size="12" fill="#000" textLength="64" lengthAdjust="spacingAndGlyphs" font-weight="bold" >Description</text>
<text x="473.2" y="554.7" font-size="12" fill="#000" textLength="71.8" lengthAdjust="spacingAndGlyphs" font-weight="bold" >Reported_By</text>
<text x="580" y="554.7" font-size="12" fill="#000" textLength="74" lengthAdjust="spacingAndGlyphs" font-weight="bold" >Reported_On</text>
<text x="47" y="578.3" font-size="12" fill="#000" textLength="5.5" lengthAdjust="spacingAndGlyphs" font-weight="bold" >1</text>
<text x="60.6" y="578.2" font-size="12" fill="#ffffff" textLength="91" lengthAdjust="spacingAndGlyphs" >FFAB5748-D9A4...</text>
<text x="161.2" y="578.2" font-size="12" fill="#ffffff" textLength="11.8" lengthAdjust="spacingAndGlyphs" >18</text>
<text x="261" y="578.2" font-size="12" fill="#ffffff" textLength="24.3" lengthAdjust="spacingAndGlyphs" >TREE</text>
<text x="372.6" y="578.2" font-size="12" fill="#ffffff" textLength="88.2" lengthAdjust="spacingAndGlyphs" >A large branch ...</text>
<text x="472.6" y="578.2" font-size="12" fill="#ffffff" textLength="96.8" lengthAdjust="spacingAndGlyphs" >Matt@safeville.g...</text>
<text x="579.6" y="578.2" font-size="12" fill="#ffffff" textLength="84" lengthAdjust="spacingAndGlyphs" >165411944228...</text>
</g>
<rect x="41.7" y="749" width="236.3" height="20" fill="#ffffff"/>
<rect x="41.7" y="768.6" width="236.3" height="1.2" fill="#8a8a8a"/>
<circle cx="50" cy="758" r="3.6" fill="none" stroke="#1a1a1a" stroke-width="1.6"/>
<line x1="52.8" y1="760.9" x2="56.6" y2="764.8" stroke="#1a1a1a" stroke-width="2" stroke-linecap="round"/>
<text x="285.3" y="764" font-size="12" fill="#000" textLength="9.4" lengthAdjust="spacingAndGlyphs" >in</text>
<rect x="301.7" y="749" width="236.5" height="20" rx="2" fill="#f8f8f8" stroke="#e2e2e2" stroke-width="1"/>
<text x="305.4" y="764" font-size="12" fill="#000" textLength="62.3" lengthAdjust="spacingAndGlyphs" >any column</text>
<path d="M525.4,757.3 L529.6,761.5 L533.8000000000001,757.3" fill="none" stroke="#333" stroke-width="1.1"/>
<text x="545.3" y="764" font-size="12" fill="#000" textLength="104.2" lengthAdjust="spacingAndGlyphs" >1 selected / 1 row(s)</text>
<rect x="661.1" y="493.5" width="1" height="282.1" fill="#dcdcdc"/>
<rect x="661.6" y="493.0" width="6.399999999999977" height="1" fill="#dcdcdc"/>
<rect x="718.5" y="493.0" width="468.0" height="1" fill="#dcdcdc"/>
<rect x="1186.0" y="493.5" width="1" height="282.1" fill="#d6d6d6"/>
<text x="670.5" y="497.5" font-size="12" fill="#000" textLength="45.6" lengthAdjust="spacingAndGlyphs" >Graphics</text>
<rect x="668.5" y="508.2" width="26.3" height="40.2" rx="2.5" fill="#cce4f7" stroke="#99ccf5" stroke-width="1"/>
<path d="M678.5,514 L682.2,521.5 L674.8,521.5Z" fill="none" stroke="#2a3a4a" stroke-width="1.1"/>
<rect x="675" y="523.3" width="5.6" height="5.2" fill="#a9c9ef" stroke="#2a3a4a" stroke-width="1.1"/>
<circle cx="685.8" cy="523.5" r="2.9" fill="none" stroke="#2a3a4a" stroke-width="1.1"/>
<text x="675.2" y="544.1" font-size="12" fill="#000" textLength="13.2" lengthAdjust="spacingAndGlyphs" >2D</text>
<path d="M706,512.5 L710.3,518 L701.5,518Z" fill="#3a6ea8" stroke="#1a2a4a" stroke-width="0.9"/>
<circle cx="712.5" cy="520" r="3" fill="#5a90c8" stroke="#1a2a4a" stroke-width="0.9"/>
<path d="M702.5,520.5 L707,518.5 L711,520.5 L711,525.5 L706.8,527.8 L702.5,525.5Z" fill="#3a70b0" stroke="#1a2a4a" stroke-width="0.9"/>
<path d="M702.5,520.5 L706.8,522.6 L711,520.5 M706.8,522.6 V527.8" fill="none" stroke="#1a2a4a" stroke-width="0.8"/>
<text x="701.3" y="544.1" font-size="12" fill="#000" textLength="13.8" lengthAdjust="spacingAndGlyphs" >3D</text>
<path d="M749,514.5 h12 l1.8,1.8 h-15.6z" fill="#c8d0d8" stroke="#4a5a6a" stroke-width="0.8"/>
<rect x="747.3" y="516" width="15.4" height="9.3" fill="#9cc4ec" stroke="#2a3a5a" stroke-width="1"/>
<path d="M753.5,518 L757.6,520.6 L753.5,523.2Z" fill="#1a2a4a"/>
<rect x="747" y="525.8" width="16" height="2" fill="#b0b4b8"/><rect x="751" y="526.2" width="2" height="1.6" fill="#333"/>
<text x="728" y="544.1" font-size="12" fill="#000" textLength="53.3" lengthAdjust="spacingAndGlyphs" >Slideshow</text>
<rect x="789.7" y="511" width="1" height="35" fill="#d0d0d0"/>
<path d="M809.5,519.3 L814,517 L818.5,519.3 L818.5,524.5 L814,526.8 L809.5,524.5Z" fill="#b4b4b4" stroke="#9a9a9a" stroke-width="0.8"/>
<path d="M809.5,519.3 L814,521.5 L818.5,519.3 M814,521.5 V526.8" fill="none" stroke="#8a8a8a" stroke-width="0.7"/>
<path d="M808,517.5 a7,7 0 0 1 9,-3.5 M820,526 a7,7 0 0 1 -8,3.5" fill="none" stroke="#b0b0b0" stroke-width="1"/>
<text x="800.5" y="544.1" font-size="12" fill="#9b9b9b" textLength="26.3" lengthAdjust="spacingAndGlyphs" >Orbit</text>
<rect x="834.2" y="508.2" width="43.5" height="40.2" rx="2.5" fill="#cce4f7" stroke="#99ccf5" stroke-width="1"/>
<circle cx="854.5" cy="518.5" r="4.6" fill="#f6c25a" stroke="#4a3a10" stroke-width="1.1"/>
<rect x="853.9" y="517.6" width="1.3" height="3.4" fill="#2a2000"/><rect x="853.9" y="515.6" width="1.3" height="1.2" fill="#2a2000"/>
<path d="M857,518.3 v9.6 l2.3,-2.2 l2,3.8 l1.6,-0.9 l-2,-3.7 h3.3z" fill="#101820"/>
<text x="840.7" y="544.1" font-size="12" fill="#000" textLength="31.2" lengthAdjust="spacingAndGlyphs" >Select</text>
<path d="M890.5,527.5 v-3 l-2.3,-3.3 q-0.6,-1.6 1,-1.3 l1.8,1.8 v-6 q0.8,-1.2 1.6,0 v-1.4 q0.9,-1.2 1.8,0 v0.6 q0.9,-1.1 1.7,0 v1.2 q0.9,-0.9 1.6,0.2 v6.5 l-1.2,4.7z" fill="#ffffff" stroke="#1a1a1a" stroke-width="0.9" stroke-linejoin="round"/>
<path d="M891.8,515.8 v4 M893.6,514.6 v5 M895.3,515 v4.8" stroke="#1a1a1a" stroke-width="0.8"/>
<text x="883.9" y="544.1" font-size="12" fill="#000" textLength="20" lengthAdjust="spacingAndGlyphs" >Pan</text>
<line x1="940.5" y1="521.5" x2="945.0" y2="526.0" stroke="#8a6a4a" stroke-width="2.4" stroke-linecap="round"/>
<line x1="940.5" y1="521.5" x2="945.0" y2="526.0" stroke="#3a2a1a" stroke-width="0.6"/>
<circle cx="937.5" cy="518.5" r="4.4" fill="#ffffff" stroke="#2a221a" stroke-width="1.3"/>
<path d="M935.2,518.5 h4.6 M937.5,516.2 v4.6" stroke="#2a221a" stroke-width="1.1"/>
<text x="917" y="544.1" font-size="12" fill="#000" textLength="44.5" lengthAdjust="spacingAndGlyphs" >Zoom In</text>
<line x1="1003.5" y1="521.5" x2="1008.0" y2="526.0" stroke="#8a6a4a" stroke-width="2.4" stroke-linecap="round"/>
<line x1="1003.5" y1="521.5" x2="1008.0" y2="526.0" stroke="#3a2a1a" stroke-width="0.6"/>
<circle cx="1000.5" cy="518.5" r="4.4" fill="#ffffff" stroke="#2a221a" stroke-width="1.3"/>
<path d="M998.2,518.5 h4.6" stroke="#2a221a" stroke-width="1.1"/>
<text x="975.1" y="544.1" font-size="12" fill="#000" textLength="55.2" lengthAdjust="spacingAndGlyphs" >Zoom Out</text>
<rect x="1038.8" y="510" width="1" height="36" fill="#d0d0d0"/>
<line x1="1089.3" y1="521.3" x2="1093.8" y2="525.8" stroke="#8a6a4a" stroke-width="2.4" stroke-linecap="round"/>
<line x1="1089.3" y1="521.3" x2="1093.8" y2="525.8" stroke="#3a2a1a" stroke-width="0.6"/>
<circle cx="1086.3" cy="518.3" r="4.4" fill="#f6c25a" stroke="#2a221a" stroke-width="1.3"/>
<rect x="1085.7" y="517.5" width="1.3" height="3.2" fill="#2a2000"/><rect x="1085.7" y="515.5" width="1.3" height="1.2" fill="#2a2000"/>
<text x="1049" y="544.1" font-size="12" fill="#000" textLength="79" lengthAdjust="spacingAndGlyphs" >Zoom Selected</text>
<path d="M1172.5,526.8 l2,2.6 l-2,2.6 M1175.6,526.8 l2,2.6 l-2,2.6" fill="none" stroke="#555" stroke-width="0.9"/>
<rect x="668.5" y="554.5" width="509" height="183" fill="#ffffff" stroke="#d9d9d9" stroke-width="1"/>
<rect x="669.5" y="555.5" width="507.5" height="181.3" fill="#e9ebe6" stroke="#7e8a99" stroke-width="1"/>
<defs>
<filter id="b1" x="-30%" y="-30%" width="160%" height="160%"><feGaussianBlur stdDeviation="1"/></filter>
<filter id="b2" x="-30%" y="-30%" width="160%" height="160%"><feGaussianBlur stdDeviation="2"/></filter>
<filter id="b3" x="-30%" y="-30%" width="160%" height="160%"><feGaussianBlur stdDeviation="3"/></filter>
<filter id="b5" x="-30%" y="-30%" width="160%" height="160%"><feGaussianBlur stdDeviation="5"/></filter>
<filter id="b8" x="-30%" y="-30%" width="160%" height="160%"><feGaussianBlur stdDeviation="8"/></filter>
<clipPath id="mp"><rect x="670" y="556" width="506.6" height="180.4"/></clipPath></defs>
<g clip-path="url(#mp)">
<rect x="669" y="555" width="509" height="183" fill="#e9e9e8"/>
<rect x="675" y="560" width="95" height="95" fill="#dfe3d2" filter="url(#b5)"/>
<path d="M730.6,550.6 C738.0,548.6 766.5,542.5 773.6,550.6 C780.8,558.6 779.4,590.8 773.6,599.0 C767.9,607.2 745.1,602.6 739.2,599.7 C733.3,596.8 739.3,586.1 738.3,581.6 C737.2,577.0 734.4,575.6 732.9,572.4 C731.3,569.1 729.5,565.7 729.1,562.0 C728.7,558.4 723.2,552.5 730.6,550.6Z" fill="#a0bc8e" filter="url(#b2)" opacity="1"/>
<ellipse cx="673.5" cy="564.9" rx="4.5" ry="7" fill="#a0bc8e" filter="url(#b2)" opacity="0.9"/>
<ellipse cx="693.8" cy="577.0" rx="6" ry="7" fill="#a0bc8e" filter="url(#b3)" opacity="0.9"/>
<path d="M706.5,603.6 C707.3,601.8 710.5,602.9 715.4,603.1 C720.3,603.4 730.4,604.5 735.7,605.3 C741.0,606.2 743.8,606.8 747.2,608.2 C750.7,609.6 753.7,611.9 756.4,613.9 C759.1,616.0 761.2,617.6 763.3,620.6 C765.4,623.6 767.4,628.6 769.0,632.1 C770.7,635.5 772.2,638.9 773.1,641.3 C773.9,643.6 773.9,640.4 774.2,646.0 C774.5,651.6 777.2,670.6 774.8,674.7 C772.4,678.8 764.1,672.8 759.9,670.7 C755.6,668.6 753.9,664.2 749.5,662.1 C745.1,660.0 737.5,660.0 733.4,658.1 C729.4,656.1 727.3,652.6 725.4,650.6 C723.5,648.6 722.3,648.7 722.0,646.0 C721.6,643.3 724.5,637.5 723.1,634.4 C721.8,631.3 716.0,630.9 713.9,627.5 C711.8,624.0 711.7,617.7 710.5,613.7 C709.2,609.7 705.6,605.4 706.5,603.6Z" fill="#a0bc8e" filter="url(#b2)" opacity="1"/>
<path d="M780.0,621.7 L811.5,621.2 L840.0,622.9 L836.0,622.9 L849.8,621.7 L859.0,614.3 L865.9,600.5 L911.8,600.5 L927.9,616.0 L937.6,620.0 L937.8,646.0 L937.8,679.3 L929.0,683.9 L922.7,697.7 L916.4,710.3 L909.5,720.6 L903.7,726.4 L861.3,726.4 L847.5,731.5 L833.7,731.5 L840.0,728.7 L833.3,725.2 L834.5,706.3 L817.3,694.8 L805.8,685.6 L794.3,681.0 L785.7,680.4 L785.3,663.2 L782.8,646.0 L778.8,627.5Z" fill="#a0bc8e" filter="url(#b1)" opacity="1"/>
<path d="M937.8,678.7 C938.2,679.5 932.4,680.7 930.2,683.9 C927.9,687.0 926.4,693.3 924.4,697.7 C922.4,702.1 920.3,706.5 918.1,710.3 C915.9,714.1 913.4,718.0 911.2,720.6 C909.0,723.3 907.9,725.4 904.9,726.4 C901.9,727.3 893.0,729.1 893.4,726.4 C893.8,723.7 903.4,716.0 907.2,710.3 C911.0,704.6 912.9,697.1 916.4,691.9 C919.8,686.8 924.3,681.5 927.9,679.3 C931.4,677.1 937.5,678.0 937.8,678.7Z" fill="#a0bc8e" filter="url(#b3)" opacity="1"/>
<ellipse cx="888.2" cy="605.7" rx="6" ry="7" fill="#e6e9e0" filter="url(#b3)" opacity="0.85"/>
<ellipse cx="765.6" cy="626.3" rx="7" ry="6" fill="#eef0ea" filter="url(#b3)" opacity="0.9"/>
<path d="M931.3,578.7 C938.5,575.0 957.4,577.1 958.6,578.7 C959.8,580.3 941.9,581.5 938.5,588.4 C935.2,595.4 940.3,616.0 938.5,620.6 C936.8,625.2 931.7,619.3 927.9,616.0 C924.0,612.8 914.7,607.3 915.2,601.1 C915.8,594.9 924.1,582.4 931.3,578.7Z" fill="#a0bc8e" filter="url(#b2)" opacity="1"/>
<path d="M917.0,600.5 L937.6,602.0 L937.6,621.7 L927.9,615.4Z" fill="#e9e9e8" filter="url(#b1)" opacity="1"/>
<path d="M938.5,551.7 L1019.7,551.7 L1178.0,551.7 L1178.0,645.9 L1178.0,654.0 L1120.8,651.2 L1079.5,648.3 L1053.1,637.2 L1006.0,614.9 L985.3,608.0 L962.3,599.9 L939.3,592.5 L938.5,588.4Z" fill="#a0bc8e" opacity="1"/>
<ellipse cx="1086.4" cy="557.4" rx="46" ry="5.5" fill="#ecede9" filter="url(#b3)" opacity="1"/>
<path d="M1095.0,654.6 L1178.0,658.6 L1178.0,708.6 L1169.6,710.3 L1162.4,719.5 L1165.0,737.9 L1142.1,737.9 L1142.1,729.8 L1127.7,711.4 L1120.8,700.0 L1116.2,694.2 L1109.3,686.2 L1097.9,673.6Z" fill="#a0bc8e" filter="url(#b2)" opacity="1"/>
<ellipse cx="1107.0" cy="696.5" rx="12" ry="12" fill="#a0bc8e" filter="url(#b3)" opacity="1"/>
<ellipse cx="1070.3" cy="713.7" rx="13" ry="11" fill="#a0bc8e" filter="url(#b5)" opacity="1"/>
<ellipse cx="1020.9" cy="734.4" rx="16" ry="4" fill="#a0bc8e" filter="url(#b3)" opacity="1"/>
<ellipse cx="847.5" cy="735.0" rx="12" ry="3" fill="#a0bc8e" filter="url(#b2)" opacity="1"/>
<ellipse cx="997.3" cy="699.4" rx="5" ry="5" fill="#c3d3a6" filter="url(#b3)" opacity="1"/>
<ellipse cx="1003.1" cy="685.0" rx="3.5" ry="4" fill="#cfd8b0" filter="url(#b3)" opacity="1"/>
<ellipse cx="1000.2" cy="719.5" rx="4" ry="4" fill="#c3d3a6" filter="url(#b3)" opacity="1"/>
<ellipse cx="823.0" cy="710.3" rx="8" ry="5" fill="#c9d5ad" filter="url(#b3)" opacity="1"/>
<path d="M968.0,608.0 C972.8,608.2 997.9,620.0 1008.0,624.0 C1018.2,628.1 1021.3,628.8 1029.0,632.1 C1036.7,635.3 1050.4,640.1 1054.2,643.6 C1058.1,647.0 1055.2,651.3 1051.9,652.9 C1048.7,654.4 1040.4,654.0 1034.7,652.9 C1029.0,651.7 1023.8,648.7 1017.5,646.0 C1011.2,643.3 1003.1,640.5 996.8,636.7 C990.4,632.8 984.3,627.7 979.5,622.9 C974.7,618.1 963.3,607.8 968.0,608.0Z" fill="#d3d9b4" filter="url(#b2)" opacity="1"/>
<path d="M853.2,645.9 C854.9,643.2 856.7,639.6 859.0,637.8 C861.3,636.0 861.3,635.2 867.0,635.0 C872.7,634.7 886.3,636.0 893.4,636.1 C900.5,636.2 905.7,634.3 909.5,635.5 C913.3,636.8 914.7,641.8 916.4,643.6 C918.1,645.3 917.9,644.3 919.8,646.0 C921.7,647.7 925.8,651.2 927.9,654.0 C929.9,656.9 931.5,660.5 931.9,663.2 C932.3,665.9 932.0,668.6 930.2,670.1 C928.3,671.6 923.3,671.3 921.0,672.4 C918.7,673.6 918.7,675.9 916.4,677.0 C914.1,678.1 910.3,678.7 907.2,678.7 C904.1,678.7 901.8,678.1 898.0,677.0 C894.2,675.9 888.8,673.8 884.2,672.4 C879.6,671.0 874.8,669.1 870.4,668.4 C866.0,667.7 861.2,669.3 857.8,668.4 C854.5,667.5 851.9,665.6 850.4,663.2 C848.8,660.8 848.2,656.9 848.6,654.0 C849.1,651.1 851.5,648.6 853.2,645.9Z" fill="#99b2ce" opacity="1"/>
<path d="M969.8,551.7 L972.6,560.9 L986.4,566.6 L996.8,571.2 L993.3,579.3 L984.1,587.3 L988.7,587.3 L996.8,593.0 L1002.5,599.9 L1006.0,599.9 L1017.5,606.8 L1035.9,613.7 L1037.0,610.3 L1029.0,604.5 L1023.2,599.9 L1016.3,594.2 L1012.9,587.3 L1033.6,584.4 L1051.9,593.0 L1074.9,599.9 L1079.5,606.8 L1091.0,605.7 L1088.7,614.9 L1101.3,610.3 L1112.8,613.7 L1122.0,619.4 L1122.0,624.0 L1130.0,627.5 L1141.5,621.7 L1155.3,624.0 L1159.9,616.0 L1149.5,604.5 L1154.1,597.6 L1166.8,597.1 L1178.0,598.8 L1178.0,580.4 L1166.8,585.0 L1154.1,587.3 L1140.3,594.2 L1132.3,588.4 L1120.8,590.7 L1109.3,591.9 L1097.9,587.3 L1086.4,581.6 L1071.4,578.1 L1064.6,572.4 L1051.9,572.4 L1034.7,568.9 L1023.2,560.9 L1017.5,556.9 L1006.0,551.7Z" fill="#99b2ce" opacity="1"/>
<path d="M1032.4,588.4 C1034.7,586.2 1044.8,593.0 1051.9,595.3 C1059.0,597.6 1069.2,599.9 1074.9,602.2 C1080.6,604.5 1083.3,606.8 1086.4,609.1 C1089.4,611.4 1095.2,613.9 1093.3,616.0 C1091.4,618.1 1081.8,621.4 1074.9,621.7 C1068.0,622.1 1058.1,620.4 1051.9,618.3 C1045.8,616.2 1041.4,614.1 1038.2,609.1 C1034.9,604.1 1030.1,590.7 1032.4,588.4Z" fill="#84a79a" filter="url(#b3)" opacity="0.85"/>
<path d="M1065.7,573.5 C1065.7,574.7 1079.1,579.6 1086.4,582.7 C1093.6,585.8 1101.7,590.9 1109.3,591.9 C1117.0,592.8 1127.5,590.0 1132.3,588.4 C1137.1,586.9 1141.9,584.0 1138.0,582.7 C1134.2,581.4 1118.0,581.6 1109.3,580.4 C1100.7,579.3 1093.6,577.0 1086.4,575.8 C1079.1,574.7 1065.7,572.4 1065.7,573.5Z" fill="#8aab96" filter="url(#b3)" opacity="0.7"/>
<path d="M680.4,552.9 L680.2,703.4" fill="none" stroke="#f6f6f4" stroke-width="5.2" stroke-linecap="butt" stroke-linejoin="round"/>
<path d="M715.4,552.9 L715.4,600.5" fill="none" stroke="#f6f6f4" stroke-width="5.2" stroke-linecap="butt" stroke-linejoin="round"/>
<path d="M668.0,587.3 C670.9,587.3 680.8,586.5 685.2,587.3 C689.6,588.1 691.2,590.1 694.4,591.9 C697.7,593.7 701.2,596.8 704.7,598.2 C708.2,599.6 710.3,599.7 715.4,600.5 C720.6,601.3 730.4,601.9 735.7,602.8 C741.0,603.7 743.8,604.2 747.2,605.7 C750.7,607.1 753.4,609.5 756.4,611.4 C759.5,613.3 762.3,615.9 765.6,617.2 C768.9,618.4 771.1,618.8 775.9,618.9 C780.7,619.0 788.4,617.9 794.3,617.7 C800.2,617.5 805.8,617.4 811.5,617.7 C817.3,618.1 824.0,619.4 828.8,619.7 C833.5,620.0 836.2,619.7 840.0,619.4 C843.8,619.2 847.9,619.6 851.5,618.3 C855.1,617.0 859.1,614.5 861.8,611.4 C864.5,608.3 865.8,603.2 867.6,599.9 C869.3,596.7 870.3,594.4 872.2,591.9 C874.0,589.4 877.3,587.7 878.5,585.0 C879.6,582.3 879.3,579.1 879.0,575.8 C878.8,572.6 877.7,569.3 876.7,565.5 C875.8,561.7 873.9,555.0 873.3,552.9" fill="none" stroke="#f6f6f4" stroke-width="5.4" stroke-linecap="butt" stroke-linejoin="round"/>
<path d="M725.1,552.9 C725.1,554.6 724.4,560.1 725.1,563.2 C725.7,566.2 727.2,568.4 728.9,571.2 C730.5,574.1 734.0,575.2 735.2,580.4 C736.3,585.6 735.7,598.6 735.7,602.2" fill="none" stroke="#f6f6f4" stroke-width="4.5" stroke-linecap="butt" stroke-linejoin="round"/>
<path d="M775.7,552.9 L775.7,618.3 L776.5,647.6" fill="none" stroke="#f6f6f4" stroke-width="4.8" stroke-linecap="butt" stroke-linejoin="round"/>
<path d="M668.0,699.7 C669.9,700.3 671.4,700.3 679.5,703.4 C687.5,706.5 705.9,715.7 716.2,718.3 C726.6,721.0 731.5,719.1 741.5,719.5 C751.4,719.8 767.1,719.8 775.9,720.4 C784.7,721.0 787.2,722.6 794.3,723.2 C801.4,723.7 812.1,723.0 818.4,723.9 C824.7,724.7 828.6,726.8 832.2,728.1 C835.8,729.4 836.8,731.0 840.0,731.5 C843.2,732.1 847.3,732.6 851.5,731.5 C855.7,730.5 857.6,726.3 865.3,725.2 C872.9,724.2 888.2,725.0 897.4,725.2 C906.6,725.4 914.1,726.4 920.4,726.4 C926.7,726.4 931.7,726.0 935.3,725.2 C938.9,724.5 938.2,724.8 942.2,721.8 C946.2,718.7 951.2,713.9 959.4,706.9 C967.7,699.8 983.3,686.6 991.6,679.3 C999.8,672.0 1005.9,665.9 1008.8,663.2" fill="none" stroke="#f6f6f4" stroke-width="5.0" stroke-linecap="butt" stroke-linejoin="round"/>
<path d="M679.5,703.4 L668.0,720.6" fill="none" stroke="#f6f6f4" stroke-width="5.0" stroke-linecap="butt" stroke-linejoin="round"/>
<path d="M668.0,715.5 L702.4,733.3" fill="none" stroke="#f6f6f4" stroke-width="5.0" stroke-linecap="butt" stroke-linejoin="round"/>
<path d="M716.2,719.5 L709.9,733.3" fill="none" stroke="#f6f6f4" stroke-width="5.0" stroke-linecap="butt" stroke-linejoin="round"/>
<path d="M741.1,663.8 L741.1,737.9" fill="none" stroke="#f6f6f4" stroke-width="5.2" stroke-linecap="butt" stroke-linejoin="round"/>
<path d="M776.5,644.9 C777.3,647.3 780.1,655.2 781.1,659.8 C782.1,664.4 782.2,667.4 782.2,672.4 C782.2,677.4 781.8,684.1 781.1,689.6 C780.4,695.2 779.0,700.7 778.2,705.7 C777.5,710.7 776.8,714.1 776.5,719.5 C776.2,724.8 776.5,734.8 776.5,737.9" fill="none" stroke="#f6f6f4" stroke-width="4.6" stroke-linecap="butt" stroke-linejoin="round"/>
<path d="M862.4,552.9 C871.0,560.7 903.2,589.6 914.1,599.9 C925.0,610.3 920.8,610.5 927.9,614.9 C934.9,619.3 947.0,622.5 956.6,626.3 C966.1,630.2 979.3,634.6 985.3,637.8 C991.2,641.1 988.9,641.6 992.2,645.9 C995.4,650.1 1002.1,659.6 1004.8,663.1 C1007.4,666.5 1007.5,666.0 1008.0,666.5" fill="none" stroke="#f6f6f4" stroke-width="5.2" stroke-linecap="butt" stroke-linejoin="round"/>
<path d="M1006.0,663.2 C1007.9,665.1 1013.7,669.9 1017.5,674.7 C1021.3,679.5 1024.6,685.6 1029.0,691.9 C1033.4,698.2 1039.7,706.9 1043.9,712.6 C1048.1,718.3 1051.4,722.0 1054.2,726.4 C1057.1,730.8 1060.0,736.9 1061.1,739.0" fill="none" stroke="#f6f6f4" stroke-width="5.0" stroke-linecap="butt" stroke-linejoin="round"/>
<path d="M1042.7,737.9 L1051.9,729.8" fill="none" stroke="#f6f6f4" stroke-width="5.0" stroke-linecap="butt" stroke-linejoin="round"/>
<path d="M684.1,552.9 L684.1,584.1" fill="none" stroke="#9c9c9c" stroke-width="1.7" stroke-linecap="round" stroke-linejoin="round"/>
<path d="M684.1,563.0 L713.4,563.0" fill="none" stroke="#9c9c9c" stroke-width="1.7" stroke-linecap="round" stroke-linejoin="round"/>
<path d="M704.7,563.8 C704.4,568.1 703.4,584.9 702.4,589.6 C701.5,594.3 699.6,591.5 699.0,591.9" fill="none" stroke="#9c9c9c" stroke-width="1.3" stroke-linecap="round" stroke-linejoin="round"/>
<path d="M732.3,572.4 L738.3,572.9" fill="none" stroke="#9c9c9c" stroke-width="1.7" stroke-linecap="round" stroke-linejoin="round"/>
<path d="M722.0,580.2 L727.7,580.2" fill="none" stroke="#9c9c9c" stroke-width="1.7" stroke-linecap="round" stroke-linejoin="round"/>
<path d="M727.7,577.0 L728.9,587.3" fill="none" stroke="#9c9c9c" stroke-width="1.7" stroke-linecap="round" stroke-linejoin="round"/>
<path d="M718.5,587.5 L734.0,587.5" fill="none" stroke="#9c9c9c" stroke-width="1.7" stroke-linecap="round" stroke-linejoin="round"/>
<path d="M720.2,587.5 L720.2,598.2" fill="none" stroke="#9c9c9c" stroke-width="1.7" stroke-linecap="round" stroke-linejoin="round"/>
<path d="M723.7,595.0 L734.0,595.0" fill="none" stroke="#9c9c9c" stroke-width="1.7" stroke-linecap="round" stroke-linejoin="round"/>
<path d="M736.9,600.5 L774.8,598.6 L840.0,598.6" fill="none" stroke="#9c9c9c" stroke-width="1.4" stroke-linecap="round" stroke-linejoin="round"/>
<path d="M766.2,599.9 L766.2,608.0 L770.8,608.5" fill="none" stroke="#9c9c9c" stroke-width="1.7" stroke-linecap="round" stroke-linejoin="round"/>
<path d="M788.6,599.4 L788.6,608.5" fill="none" stroke="#9c9c9c" stroke-width="1.7" stroke-linecap="round" stroke-linejoin="round"/>
<path d="M785.1,608.9 L792.0,608.9" fill="none" stroke="#9c9c9c" stroke-width="1.7" stroke-linecap="round" stroke-linejoin="round"/>
<path d="M800.6,599.4 L800.6,609.1" fill="none" stroke="#9c9c9c" stroke-width="1.7" stroke-linecap="round" stroke-linejoin="round"/>
<path d="M799.5,608.9 L805.2,608.5" fill="none" stroke="#9c9c9c" stroke-width="1.7" stroke-linecap="round" stroke-linejoin="round"/>
<path d="M818.4,599.4 L819.0,608.5 L840.0,609.1" fill="none" stroke="#9c9c9c" stroke-width="1.7" stroke-linecap="round" stroke-linejoin="round"/>
<path d="M785.1,557.4 L824.2,558.6" fill="none" stroke="#9c9c9c" stroke-width="1.7" stroke-linecap="round" stroke-linejoin="round"/>
<path d="M785.1,557.4 L785.1,577.5" fill="none" stroke="#9c9c9c" stroke-width="1.7" stroke-linecap="round" stroke-linejoin="round"/>
<path d="M785.1,568.4 L820.7,568.7 L827.6,575.8 L833.9,578.1 L840.0,578.1" fill="none" stroke="#9c9c9c" stroke-width="1.7" stroke-linecap="round" stroke-linejoin="round"/>
<path d="M824.2,552.9 L824.2,564.3 L820.7,568.7" fill="none" stroke="#9c9c9c" stroke-width="1.7" stroke-linecap="round" stroke-linejoin="round"/>
<path d="M777.1,578.1 L816.7,578.1 L824.2,584.4 L824.7,598.2" fill="none" stroke="#9c9c9c" stroke-width="1.7" stroke-linecap="round" stroke-linejoin="round"/>
<path d="M827.6,575.8 L821.9,582.1" fill="none" stroke="#9c9c9c" stroke-width="1.7" stroke-linecap="round" stroke-linejoin="round"/>
<path d="M833.9,552.9 L833.9,578.1" fill="none" stroke="#9c9c9c" stroke-width="1.7" stroke-linecap="round" stroke-linejoin="round"/>
<path d="M799.5,587.5 L784.5,587.5 L784.5,598.2" fill="none" stroke="#9c9c9c" stroke-width="1.7" stroke-linecap="round" stroke-linejoin="round"/>
<path d="M824.7,587.9 L840.0,587.9" fill="none" stroke="#9c9c9c" stroke-width="1.7" stroke-linecap="round" stroke-linejoin="round"/>
<path d="M777.1,567.8 L780.0,567.8" fill="none" stroke="#9c9c9c" stroke-width="1.7" stroke-linecap="round" stroke-linejoin="round"/>
<path d="M681.8,599.4 L696.7,599.7" fill="none" stroke="#9c9c9c" stroke-width="1.7" stroke-linecap="round" stroke-linejoin="round"/>
<path d="M671.4,606.8 L678.9,606.8" fill="none" stroke="#9c9c9c" stroke-width="1.7" stroke-linecap="round" stroke-linejoin="round"/>
<path d="M690.4,622.9 L704.7,622.9 L707.6,619.4 L708.8,609.1 L705.9,606.6 L692.1,606.2 L690.4,608.0 L690.4,630.9" fill="none" stroke="#9c9c9c" stroke-width="1.3" stroke-linecap="round" stroke-linejoin="round"/>
<path d="M696.1,614.3 L699.0,617.2 L699.0,622.3" fill="none" stroke="#9c9c9c" stroke-width="1.7" stroke-linecap="round" stroke-linejoin="round"/>
<path d="M668.0,616.9 L678.9,614.9 L689.8,614.5" fill="none" stroke="#9c9c9c" stroke-width="1.7" stroke-linecap="round" stroke-linejoin="round"/>
<path d="M668.0,624.3 L678.9,623.5" fill="none" stroke="#9c9c9c" stroke-width="1.7" stroke-linecap="round" stroke-linejoin="round"/>
<path d="M668.0,633.5 L679.5,631.9 L724.3,631.5" fill="none" stroke="#9c9c9c" stroke-width="1.7" stroke-linecap="round" stroke-linejoin="round"/>
<path d="M716.8,622.9 L716.8,647.0" fill="none" stroke="#9c9c9c" stroke-width="1.7" stroke-linecap="round" stroke-linejoin="round"/>
<path d="M695.0,632.1 L695.0,647.0" fill="none" stroke="#9c9c9c" stroke-width="1.7" stroke-linecap="round" stroke-linejoin="round"/>
<path d="M703.6,632.1 L703.6,647.0" fill="none" stroke="#9c9c9c" stroke-width="1.7" stroke-linecap="round" stroke-linejoin="round"/>
<path d="M688.7,639.5 L695.0,639.5" fill="none" stroke="#9c9c9c" stroke-width="1.7" stroke-linecap="round" stroke-linejoin="round"/>
<path d="M703.6,639.9 L708.2,639.9" fill="none" stroke="#9c9c9c" stroke-width="1.7" stroke-linecap="round" stroke-linejoin="round"/>
<path d="M717.4,642.2 L722.5,642.2" fill="none" stroke="#9c9c9c" stroke-width="1.7" stroke-linecap="round" stroke-linejoin="round"/>
<path d="M668.0,643.0 L673.7,641.3" fill="none" stroke="#9c9c9c" stroke-width="1.7" stroke-linecap="round" stroke-linejoin="round"/>
<path d="M776.3,644.9 L776.3,719.5" fill="none" stroke="#9c9c9c" stroke-width="1.3" stroke-linecap="round" stroke-linejoin="round"/>
<path d="M682.9,714.3 L725.4,735.0" fill="none" stroke="#9c9c9c" stroke-width="1.5" stroke-linecap="round" stroke-linejoin="round"/>
<path d="M695.0,712.0 L677.2,736.7" fill="none" stroke="#9c9c9c" stroke-width="1.5" stroke-linecap="round" stroke-linejoin="round"/>
<path d="M681.8,664.4 L741.5,664.4 L748.4,660.7 L770.2,710.3 L775.9,714.9" fill="none" stroke="#9c9c9c" stroke-width="1.5" stroke-linecap="round" stroke-linejoin="round"/>
<path d="M686.4,647.7 L717.4,647.7" fill="none" stroke="#9c9c9c" stroke-width="1.7" stroke-linecap="round" stroke-linejoin="round"/>
<path d="M681.8,656.1 L688.7,656.1" fill="none" stroke="#9c9c9c" stroke-width="1.7" stroke-linecap="round" stroke-linejoin="round"/>
<path d="M703.0,656.1 L717.4,656.1" fill="none" stroke="#9c9c9c" stroke-width="1.7" stroke-linecap="round" stroke-linejoin="round"/>
<path d="M695.0,644.9 L695.0,680.4" fill="none" stroke="#9c9c9c" stroke-width="1.7" stroke-linecap="round" stroke-linejoin="round"/>
<path d="M717.4,644.9 L717.4,669.5" fill="none" stroke="#9c9c9c" stroke-width="1.7" stroke-linecap="round" stroke-linejoin="round"/>
<path d="M708.2,664.9 L708.2,713.2" fill="none" stroke="#9c9c9c" stroke-width="1.7" stroke-linecap="round" stroke-linejoin="round"/>
<path d="M681.8,680.4 L717.4,680.4" fill="none" stroke="#9c9c9c" stroke-width="1.7" stroke-linecap="round" stroke-linejoin="round"/>
<path d="M681.8,697.7 L717.4,697.7" fill="none" stroke="#9c9c9c" stroke-width="1.7" stroke-linecap="round" stroke-linejoin="round"/>
<path d="M689.2,680.4 L689.2,705.7" fill="none" stroke="#9c9c9c" stroke-width="1.7" stroke-linecap="round" stroke-linejoin="round"/>
<path d="M697.3,680.4 L697.3,697.7" fill="none" stroke="#9c9c9c" stroke-width="1.7" stroke-linecap="round" stroke-linejoin="round"/>
<path d="M700.2,697.7 L700.2,710.3" fill="none" stroke="#9c9c9c" stroke-width="1.7" stroke-linecap="round" stroke-linejoin="round"/>
<path d="M717.9,674.7 L717.9,718.3" fill="none" stroke="#9c9c9c" stroke-width="1.7" stroke-linecap="round" stroke-linejoin="round"/>
<path d="M717.9,674.7 L780.0,674.7" fill="none" stroke="#9c9c9c" stroke-width="1.7" stroke-linecap="round" stroke-linejoin="round"/>
<path d="M717.9,685.0 C722.8,685.0 741.5,683.9 747.2,685.0 C753.0,686.2 751.5,689.4 752.4,691.9 C753.3,694.4 752.4,698.6 752.4,700.0" fill="none" stroke="#9c9c9c" stroke-width="1.3" stroke-linecap="round" stroke-linejoin="round"/>
<path d="M717.9,695.1 L739.8,695.1" fill="none" stroke="#9c9c9c" stroke-width="1.7" stroke-linecap="round" stroke-linejoin="round"/>
<path d="M742.6,700.0 L759.9,700.0 L769.0,696.5" fill="none" stroke="#9c9c9c" stroke-width="1.7" stroke-linecap="round" stroke-linejoin="round"/>
<path d="M718.5,704.6 L731.2,704.6" fill="none" stroke="#9c9c9c" stroke-width="1.7" stroke-linecap="round" stroke-linejoin="round"/>
<path d="M718.5,710.3 L769.0,710.3" fill="none" stroke="#9c9c9c" stroke-width="1.7" stroke-linecap="round" stroke-linejoin="round"/>
<path d="M727.1,710.3 L727.1,737.9" fill="none" stroke="#9c9c9c" stroke-width="1.7" stroke-linecap="round" stroke-linejoin="round"/>
<path d="M735.7,710.3 L735.7,718.9" fill="none" stroke="#9c9c9c" stroke-width="1.7" stroke-linecap="round" stroke-linejoin="round"/>
<path d="M766.2,674.7 C766.3,675.7 766.0,678.1 766.7,680.4 C767.5,682.8 769.2,687.5 770.8,689.1 C772.3,690.6 775.1,689.5 775.9,689.6" fill="none" stroke="#9c9c9c" stroke-width="1.3" stroke-linecap="round" stroke-linejoin="round"/>
<path d="M704.2,672.2 L708.2,672.2" fill="none" stroke="#9c9c9c" stroke-width="1.7" stroke-linecap="round" stroke-linejoin="round"/>
<path d="M726.0,652.3 L727.1,664.4" fill="none" stroke="#9c9c9c" stroke-width="1.7" stroke-linecap="round" stroke-linejoin="round"/>
<path d="M766.2,728.7 L775.9,728.7" fill="none" stroke="#9c9c9c" stroke-width="1.7" stroke-linecap="round" stroke-linejoin="round"/>
<path d="M670.3,658.1 L673.2,658.1" fill="none" stroke="#9c9c9c" stroke-width="1.7" stroke-linecap="round" stroke-linejoin="round"/>
<path d="M670.3,665.7 L673.2,665.7" fill="none" stroke="#9c9c9c" stroke-width="1.7" stroke-linecap="round" stroke-linejoin="round"/>
<path d="M786.8,724.1 L786.8,737.9" fill="none" stroke="#9c9c9c" stroke-width="1.7" stroke-linecap="round" stroke-linejoin="round"/>
<path d="M798.3,724.1 L798.3,737.9" fill="none" stroke="#9c9c9c" stroke-width="1.7" stroke-linecap="round" stroke-linejoin="round"/>
<path d="M808.7,724.1 L808.7,737.9" fill="none" stroke="#9c9c9c" stroke-width="1.7" stroke-linecap="round" stroke-linejoin="round"/>
<path d="M820.1,724.1 L820.1,737.9" fill="none" stroke="#9c9c9c" stroke-width="1.7" stroke-linecap="round" stroke-linejoin="round"/>
<path d="M798.3,709.7 L798.3,724.1" fill="none" stroke="#9c9c9c" stroke-width="1.7" stroke-linecap="round" stroke-linejoin="round"/>
<path d="M831.0,728.7 L831.0,737.9" fill="none" stroke="#9c9c9c" stroke-width="1.7" stroke-linecap="round" stroke-linejoin="round"/>
<path d="M818.4,714.3 L819.3,722.9" fill="none" stroke="#9c9c9c" stroke-width="1.7" stroke-linecap="round" stroke-linejoin="round"/>
<path d="M827.0,714.3 L828.2,725.2" fill="none" stroke="#9c9c9c" stroke-width="1.7" stroke-linecap="round" stroke-linejoin="round"/>
<path d="M785.1,682.2 L793.2,683.3 L803.5,687.3" fill="none" stroke="#9c9c9c" stroke-width="1.7" stroke-linecap="round" stroke-linejoin="round"/>
<path d="M782.8,685.6 L791.4,686.2 L792.0,683.9" fill="none" stroke="#9c9c9c" stroke-width="1.7" stroke-linecap="round" stroke-linejoin="round"/>
<path d="M782.8,688.5 L794.3,690.2 L798.9,693.7 L801.2,691.9 L816.1,701.1 L815.5,706.9 L810.4,708.9 L794.3,708.6 L787.4,705.1 L781.1,704.6" fill="none" stroke="#9c9c9c" stroke-width="1.3" stroke-linecap="round" stroke-linejoin="round"/>
<path d="M808.7,691.9 L813.8,691.4 L818.4,695.4 L820.7,700.0" fill="none" stroke="#9c9c9c" stroke-width="1.7" stroke-linecap="round" stroke-linejoin="round"/>
<path d="M805.2,696.5 L813.8,702.3" fill="none" stroke="#9c9c9c" stroke-width="1.7" stroke-linecap="round" stroke-linejoin="round"/>
<path d="M821.3,696.5 L828.8,700.0 L829.9,705.1" fill="none" stroke="#9c9c9c" stroke-width="1.7" stroke-linecap="round" stroke-linejoin="round"/>
<path d="M816.1,706.3 L831.6,706.6" fill="none" stroke="#9c9c9c" stroke-width="1.7" stroke-linecap="round" stroke-linejoin="round"/>
<path d="M783.4,692.5 L789.5,692.5" fill="none" stroke="#9c9c9c" stroke-width="0.8" stroke-linecap="round" stroke-linejoin="round"/>
<path d="M783.4,694.2 L789.5,694.2" fill="none" stroke="#9c9c9c" stroke-width="0.8" stroke-linecap="round" stroke-linejoin="round"/>
<path d="M783.4,695.9 L789.5,695.9" fill="none" stroke="#9c9c9c" stroke-width="0.8" stroke-linecap="round" stroke-linejoin="round"/>
<path d="M789.7,696.5 L788.6,700.0 L785.1,701.1 L784.5,704.6" fill="none" stroke="#9c9c9c" stroke-width="1.7" stroke-linecap="round" stroke-linejoin="round"/>
<path d="M937.0,601.7 L937.6,645.9" fill="none" stroke="#9c9c9c" stroke-width="1.4" stroke-linecap="round" stroke-linejoin="round"/>
<path d="M938.5,552.9 L938.5,588.4" fill="none" stroke="#9c9c9c" stroke-width="1.4" stroke-linecap="round" stroke-linejoin="round"/>
<path d="M836.0,598.6 L902.6,598.8 L910.6,599.9 L937.0,601.7" fill="none" stroke="#9c9c9c" stroke-width="1.4" stroke-linecap="round" stroke-linejoin="round"/>
<path d="M915.8,591.9 L915.8,621.2" fill="none" stroke="#9c9c9c" stroke-width="1.3" stroke-linecap="round" stroke-linejoin="round"/>
<path d="M918.7,632.7 C919.6,632.6 921.9,632.8 924.4,632.1 C926.9,631.3 931.4,628.8 933.6,628.1 C935.8,627.3 936.9,627.6 937.6,627.5" fill="none" stroke="#9c9c9c" stroke-width="1.0" stroke-linecap="round" stroke-linejoin="round"/>
<path d="M844.0,552.9 L844.0,578.1" fill="none" stroke="#9c9c9c" stroke-width="1.7" stroke-linecap="round" stroke-linejoin="round"/>
<path d="M853.2,552.9 L853.2,577.0 L849.8,583.9" fill="none" stroke="#9c9c9c" stroke-width="1.7" stroke-linecap="round" stroke-linejoin="round"/>
<path d="M836.0,578.1 L852.1,578.7" fill="none" stroke="#9c9c9c" stroke-width="1.7" stroke-linecap="round" stroke-linejoin="round"/>
<path d="M836.0,587.9 L845.2,587.9" fill="none" stroke="#9c9c9c" stroke-width="1.7" stroke-linecap="round" stroke-linejoin="round"/>
<path d="M862.4,552.9 L862.4,568.4" fill="none" stroke="#9c9c9c" stroke-width="1.7" stroke-linecap="round" stroke-linejoin="round"/>
<path d="M891.1,552.9 L891.1,572.9 L904.9,572.9" fill="none" stroke="#9c9c9c" stroke-width="1.7" stroke-linecap="round" stroke-linejoin="round"/>
<path d="M836.0,609.7 L852.1,609.7 L854.4,606.8 L854.4,599.4" fill="none" stroke="#9c9c9c" stroke-width="1.7" stroke-linecap="round" stroke-linejoin="round"/>
<path d="M882.5,599.4 L882.5,614.3 L866.4,614.3" fill="none" stroke="#9c9c9c" stroke-width="1.7" stroke-linecap="round" stroke-linejoin="round"/>
<path d="M902.6,591.9 L902.6,598.8" fill="none" stroke="#9c9c9c" stroke-width="1.7" stroke-linecap="round" stroke-linejoin="round"/>
<path d="M938.5,610.3 L964.6,610.3 L966.3,613.7 L971.5,616.0 L972.6,619.4" fill="none" stroke="#9c9c9c" stroke-width="1.7" stroke-linecap="round" stroke-linejoin="round"/>
<path d="M967.5,623.5 L978.4,615.4 L985.3,622.9 L1000.2,639.0" fill="none" stroke="#9c9c9c" stroke-width="1.7" stroke-linecap="round" stroke-linejoin="round"/>
<path d="M983.0,635.5 L999.0,622.9 L1004.8,630.4" fill="none" stroke="#9c9c9c" stroke-width="1.7" stroke-linecap="round" stroke-linejoin="round"/>
<path d="M987.6,604.5 L995.6,602.2 L1001.3,609.1 L1004.8,613.7" fill="none" stroke="#9c9c9c" stroke-width="1.0" stroke-linecap="round" stroke-linejoin="round"/>
<path d="M937.6,627.5 L960.0,637.8" fill="none" stroke="#9c9c9c" stroke-width="1.7" stroke-linecap="round" stroke-linejoin="round"/>
<path d="M956.6,628.6 L954.3,634.4" fill="none" stroke="#9c9c9c" stroke-width="1.7" stroke-linecap="round" stroke-linejoin="round"/>
<path d="M945.1,632.1 L943.9,635.5" fill="none" stroke="#9c9c9c" stroke-width="1.7" stroke-linecap="round" stroke-linejoin="round"/>
<path d="M967.5,634.4 L964.6,639.5 L984.1,645.9" fill="none" stroke="#9c9c9c" stroke-width="1.7" stroke-linecap="round" stroke-linejoin="round"/>
<path d="M949.7,642.4 L960.0,645.9" fill="none" stroke="#9c9c9c" stroke-width="1.7" stroke-linecap="round" stroke-linejoin="round"/>
<path d="M949.7,642.4 L947.4,645.9" fill="none" stroke="#9c9c9c" stroke-width="1.7" stroke-linecap="round" stroke-linejoin="round"/>
<path d="M939.3,561.5 L947.4,562.0 L957.7,566.6 L969.2,572.9 L975.5,566.6" fill="none" stroke="#9c9c9c" stroke-width="1.0" stroke-linecap="round" stroke-linejoin="round"/>
<path d="M921.5,556.3 C921.0,558.4 918.1,566.2 918.1,568.9 C918.1,571.6 921.0,571.8 921.5,572.4" fill="none" stroke="#9c9c9c" stroke-width="1.0" stroke-linecap="round" stroke-linejoin="round"/>
<path d="M922.7,556.3 C924.1,558.0 930.1,564.0 931.3,566.6 C932.5,569.3 930.3,571.4 930.2,572.4" fill="none" stroke="#9c9c9c" stroke-width="1.0" stroke-linecap="round" stroke-linejoin="round"/>
<path d="M937.8,646.0 L937.8,678.2 L934.7,680.4 L907.2,682.2" fill="none" stroke="#9c9c9c" stroke-width="1.4" stroke-linecap="round" stroke-linejoin="round"/>
<path d="M939.3,648.3 L974.9,663.8 L987.6,677.6 L999.0,691.4 L1008.0,691.9" fill="none" stroke="#9c9c9c" stroke-width="1.7" stroke-linecap="round" stroke-linejoin="round"/>
<path d="M957.7,646.0 L983.0,656.3" fill="none" stroke="#9c9c9c" stroke-width="1.7" stroke-linecap="round" stroke-linejoin="round"/>
<path d="M974.9,663.8 L991.0,650.0" fill="none" stroke="#9c9c9c" stroke-width="1.7" stroke-linecap="round" stroke-linejoin="round"/>
<path d="M979.5,667.2 L991.0,659.2" fill="none" stroke="#9c9c9c" stroke-width="1.7" stroke-linecap="round" stroke-linejoin="round"/>
<path d="M963.5,673.6 L974.9,663.8" fill="none" stroke="#9c9c9c" stroke-width="1.7" stroke-linecap="round" stroke-linejoin="round"/>
<path d="M947.4,668.4 L963.5,673.6" fill="none" stroke="#9c9c9c" stroke-width="1.7" stroke-linecap="round" stroke-linejoin="round"/>
<path d="M954.3,675.3 L958.3,670.7" fill="none" stroke="#9c9c9c" stroke-width="1.7" stroke-linecap="round" stroke-linejoin="round"/>
<path d="M938.2,671.8 L946.2,674.7" fill="none" stroke="#9c9c9c" stroke-width="1.7" stroke-linecap="round" stroke-linejoin="round"/>
<path d="M960.6,687.9 L969.8,680.4" fill="none" stroke="#9c9c9c" stroke-width="1.7" stroke-linecap="round" stroke-linejoin="round"/>
<path d="M965.2,684.5 L970.9,691.4" fill="none" stroke="#9c9c9c" stroke-width="1.7" stroke-linecap="round" stroke-linejoin="round"/>
<path d="M949.1,686.2 L942.2,690.2 L955.4,706.9 L979.5,736.7" fill="none" stroke="#9c9c9c" stroke-width="1.7" stroke-linecap="round" stroke-linejoin="round"/>
<path d="M944.5,705.7 L950.8,701.1" fill="none" stroke="#9c9c9c" stroke-width="1.7" stroke-linecap="round" stroke-linejoin="round"/>
<path d="M926.7,694.8 L933.6,689.6 L937.6,691.9 L937.6,737.9" fill="none" stroke="#9c9c9c" stroke-width="1.7" stroke-linecap="round" stroke-linejoin="round"/>
<path d="M937.6,695.4 L926.7,705.7 L917.5,705.7 L917.5,737.9" fill="none" stroke="#9c9c9c" stroke-width="1.7" stroke-linecap="round" stroke-linejoin="round"/>
<path d="M926.7,705.7 L937.6,719.5" fill="none" stroke="#9c9c9c" stroke-width="1.7" stroke-linecap="round" stroke-linejoin="round"/>
<path d="M911.2,715.2 L926.7,715.2 L927.9,717.2 L927.9,737.9" fill="none" stroke="#9c9c9c" stroke-width="1.7" stroke-linecap="round" stroke-linejoin="round"/>
<path d="M940.5,722.9 L952.0,736.7" fill="none" stroke="#9c9c9c" stroke-width="1.7" stroke-linecap="round" stroke-linejoin="round"/>
<path d="M949.1,716.0 L965.8,736.7" fill="none" stroke="#9c9c9c" stroke-width="1.7" stroke-linecap="round" stroke-linejoin="round"/>
<path d="M860.1,728.7 L860.1,737.9" fill="none" stroke="#9c9c9c" stroke-width="1.7" stroke-linecap="round" stroke-linejoin="round"/>
<path d="M860.1,733.8 L888.8,733.8" fill="none" stroke="#9c9c9c" stroke-width="1.7" stroke-linecap="round" stroke-linejoin="round"/>
<path d="M888.8,726.4 L888.8,737.9" fill="none" stroke="#9c9c9c" stroke-width="1.7" stroke-linecap="round" stroke-linejoin="round"/>
<path d="M898.6,732.7 L898.6,737.9" fill="none" stroke="#9c9c9c" stroke-width="1.7" stroke-linecap="round" stroke-linejoin="round"/>
<path d="M907.2,732.7 L907.2,737.9" fill="none" stroke="#9c9c9c" stroke-width="1.7" stroke-linecap="round" stroke-linejoin="round"/>
<path d="M969.2,706.9 L973.8,712.0" fill="none" stroke="#9c9c9c" stroke-width="1.7" stroke-linecap="round" stroke-linejoin="round"/>
<path d="M988.7,698.8 C987.2,699.2 981.7,699.6 979.5,701.1 C977.3,702.6 975.9,705.5 975.5,708.0 C975.1,710.5 976.0,714.1 977.2,716.0 C978.5,718.0 980.9,719.2 983.0,719.5 C985.1,719.8 988.0,718.7 989.9,717.8 C991.8,716.8 991.4,715.3 994.5,713.7 C997.5,712.2 1005.7,709.4 1008.0,708.6" fill="none" stroke="#9c9c9c" stroke-width="1.3" stroke-linecap="round" stroke-linejoin="round"/>
<path d="M984.1,709.2 C985.7,708.4 991.5,704.4 993.3,704.6 C995.1,704.8 994.7,709.3 995.0,710.3" fill="none" stroke="#9c9c9c" stroke-width="1.3" stroke-linecap="round" stroke-linejoin="round"/>
<path d="M994.5,713.7 C993.8,714.7 990.8,716.8 990.4,719.5 C990.1,722.2 990.7,727.0 992.2,729.8 C993.6,732.7 997.9,735.6 999.0,736.7" fill="none" stroke="#9c9c9c" stroke-width="1.3" stroke-linecap="round" stroke-linejoin="round"/>
<path d="M978.4,735.6 L989.9,727.5" fill="none" stroke="#9c9c9c" stroke-width="1.7" stroke-linecap="round" stroke-linejoin="round"/>
<path d="M1000.2,725.2 L1008.0,728.1" fill="none" stroke="#9c9c9c" stroke-width="1.7" stroke-linecap="round" stroke-linejoin="round"/>
<path d="M1003.6,710.3 L1008.0,716.0" fill="none" stroke="#9c9c9c" stroke-width="1.7" stroke-linecap="round" stroke-linejoin="round"/>
<path d="M1014.0,669.0 L1034.7,652.9" fill="none" stroke="#9c9c9c" stroke-width="1.7" stroke-linecap="round" stroke-linejoin="round"/>
<path d="M1020.9,679.3 L1042.7,662.6" fill="none" stroke="#9c9c9c" stroke-width="1.7" stroke-linecap="round" stroke-linejoin="round"/>
<path d="M1027.8,689.1 L1050.8,671.8" fill="none" stroke="#9c9c9c" stroke-width="1.7" stroke-linecap="round" stroke-linejoin="round"/>
<path d="M1032.4,695.4 L1043.3,687.9" fill="none" stroke="#9c9c9c" stroke-width="1.7" stroke-linecap="round" stroke-linejoin="round"/>
<path d="M1045.0,708.6 L1066.3,693.1" fill="none" stroke="#9c9c9c" stroke-width="1.7" stroke-linecap="round" stroke-linejoin="round"/>
<path d="M1074.9,736.7 L1109.3,708.6" fill="none" stroke="#9c9c9c" stroke-width="1.7" stroke-linecap="round" stroke-linejoin="round"/>
<path d="M1100.2,734.4 L1127.1,711.4" fill="none" stroke="#9c9c9c" stroke-width="1.7" stroke-linecap="round" stroke-linejoin="round"/>
<path d="M1120.8,736.7 L1138.0,722.9" fill="none" stroke="#9c9c9c" stroke-width="1.7" stroke-linecap="round" stroke-linejoin="round"/>
<path d="M1033.6,725.8 L1045.0,716.6" fill="none" stroke="#9c9c9c" stroke-width="1.7" stroke-linecap="round" stroke-linejoin="round"/>
<path d="M1037.0,730.4 L1043.9,724.1" fill="none" stroke="#9c9c9c" stroke-width="1.7" stroke-linecap="round" stroke-linejoin="round"/>
<path d="M1040.4,702.3 L1060.0,685.6 L1070.3,683.9 L1081.8,682.2 L1095.6,670.7" fill="none" stroke="#9c9c9c" stroke-width="1.7" stroke-linecap="round" stroke-linejoin="round"/>
<path d="M1049.6,716.0 L1077.2,694.2 L1076.0,678.7" fill="none" stroke="#9c9c9c" stroke-width="1.7" stroke-linecap="round" stroke-linejoin="round"/>
<path d="M1060.0,731.0 L1084.1,712.6 L1099.0,699.4" fill="none" stroke="#9c9c9c" stroke-width="1.7" stroke-linecap="round" stroke-linejoin="round"/>
<path d="M1032.4,648.3 L1061.1,683.9" fill="none" stroke="#9c9c9c" stroke-width="1.6" stroke-linecap="round" stroke-linejoin="round"/>
<path d="M1043.9,658.1 L1046.2,656.3 L1076.0,663.8 L1074.9,668.4" fill="none" stroke="#9c9c9c" stroke-width="1.7" stroke-linecap="round" stroke-linejoin="round"/>
<path d="M1055.4,666.7 C1056.1,667.1 1057.5,668.3 1060.0,669.0 C1062.5,669.6 1067.8,670.8 1070.3,670.7 C1072.8,670.6 1073.2,668.4 1074.9,668.4 C1076.6,668.4 1078.7,671.1 1080.6,670.7 C1082.5,670.3 1085.4,666.9 1086.4,666.1" fill="none" stroke="#9c9c9c" stroke-width="1.3" stroke-linecap="round" stroke-linejoin="round"/>
<path d="M1070.3,670.7 L1068.0,675.9 L1064.6,676.4" fill="none" stroke="#9c9c9c" stroke-width="1.7" stroke-linecap="round" stroke-linejoin="round"/>
<path d="M1049.6,683.3 L1056.5,678.7" fill="none" stroke="#9c9c9c" stroke-width="1.7" stroke-linecap="round" stroke-linejoin="round"/>
<path d="M1056.5,689.6 L1062.3,694.2" fill="none" stroke="#9c9c9c" stroke-width="1.7" stroke-linecap="round" stroke-linejoin="round"/>
<path d="M1040.4,702.3 L1045.0,708.6" fill="none" stroke="#9c9c9c" stroke-width="1.7" stroke-linecap="round" stroke-linejoin="round"/>
<path d="M1054.2,702.8 L1061.7,712.0" fill="none" stroke="#9c9c9c" stroke-width="1.7" stroke-linecap="round" stroke-linejoin="round"/>
<path d="M1084.1,712.6 L1101.3,734.4" fill="none" stroke="#9c9c9c" stroke-width="1.7" stroke-linecap="round" stroke-linejoin="round"/>
<path d="M1084.7,705.1 L1091.5,709.2" fill="none" stroke="#9c9c9c" stroke-width="1.7" stroke-linecap="round" stroke-linejoin="round"/>
<path d="M1092.1,698.8 L1095.6,702.3" fill="none" stroke="#9c9c9c" stroke-width="1.7" stroke-linecap="round" stroke-linejoin="round"/>
<path d="M1072.6,692.5 L1079.5,694.2" fill="none" stroke="#9c9c9c" stroke-width="1.7" stroke-linecap="round" stroke-linejoin="round"/>
<path d="M1082.4,681.6 L1086.4,689.6" fill="none" stroke="#9c9c9c" stroke-width="1.7" stroke-linecap="round" stroke-linejoin="round"/>
<path d="M1088.7,677.6 L1093.8,683.9" fill="none" stroke="#9c9c9c" stroke-width="1.7" stroke-linecap="round" stroke-linejoin="round"/>
<path d="M1079.5,654.6 L1091.0,656.3 L1095.0,662.1 L1095.6,670.7 L1101.3,678.2 L1108.2,686.2 L1111.1,693.1 L1116.2,694.2 L1120.8,700.0 L1124.3,705.7 L1127.7,711.4 L1138.0,722.9 L1142.1,729.8 L1139.2,736.7" fill="none" stroke="#9c9c9c" stroke-width="1.3" stroke-linecap="round" stroke-linejoin="round"/>
<path d="M1153.0,660.4 L1166.8,677.0 L1178.0,691.9" fill="none" stroke="#9c9c9c" stroke-width="1.7" stroke-linecap="round" stroke-linejoin="round"/>
<path d="M1166.8,677.0 L1178.0,666.7" fill="none" stroke="#9c9c9c" stroke-width="1.7" stroke-linecap="round" stroke-linejoin="round"/>
<path d="M1178.0,708.6 L1169.0,710.3 L1162.2,719.5 L1171.3,731.0 L1178.0,737.9" fill="none" stroke="#9c9c9c" stroke-width="1.7" stroke-linecap="round" stroke-linejoin="round"/>
<path d="M1162.2,736.7 L1178.0,721.8" fill="none" stroke="#9c9c9c" stroke-width="1.7" stroke-linecap="round" stroke-linejoin="round"/>
<path d="M1006.0,683.9 L1014.0,678.2" fill="none" stroke="#9c9c9c" stroke-width="1.7" stroke-linecap="round" stroke-linejoin="round"/>
<path d="M1006.0,657.5 L1025.5,646.0" fill="none" stroke="#9c9c9c" stroke-width="1.7" stroke-linecap="round" stroke-linejoin="round"/>
<path d="M1009.4,648.3 L1014.0,654.0" fill="none" stroke="#9c9c9c" stroke-width="1.7" stroke-linecap="round" stroke-linejoin="round"/>
<path d="M1006.0,687.3 L1012.9,695.4 L1019.8,700.0 L1026.7,694.2" fill="none" stroke="#9c9c9c" stroke-width="1.7" stroke-linecap="round" stroke-linejoin="round"/>
<path d="M1012.9,695.4 L1008.3,706.9 L1006.0,708.6" fill="none" stroke="#9c9c9c" stroke-width="1.7" stroke-linecap="round" stroke-linejoin="round"/>
<path d="M1006.0,715.5 C1007.0,715.6 1009.1,717.1 1011.7,716.0 C1014.4,715.0 1019.6,710.2 1022.1,709.2 C1024.6,708.1 1024.2,708.0 1026.7,709.7 C1029.2,711.4 1036.0,716.9 1037.0,719.5 C1038.0,722.1 1034.3,723.7 1032.4,725.2 C1030.5,726.8 1028.8,727.9 1025.5,728.7 C1022.3,729.4 1016.1,728.7 1012.9,729.8 C1009.6,731.0 1007.1,734.6 1006.0,735.6" fill="none" stroke="#9c9c9c" stroke-width="1.3" stroke-linecap="round" stroke-linejoin="round"/>
<path d="M1011.7,716.0 L1014.0,719.5 L1023.2,720.1" fill="none" stroke="#9c9c9c" stroke-width="1.7" stroke-linecap="round" stroke-linejoin="round"/>
<path d="M1037.0,719.5 L1045.0,716.6" fill="none" stroke="#9c9c9c" stroke-width="1.7" stroke-linecap="round" stroke-linejoin="round"/>
<path d="M1088.7,555.1 L1088.7,561.5" fill="none" stroke="#9c9c9c" stroke-width="1.7" stroke-linecap="round" stroke-linejoin="round"/>
<path d="M1133.5,555.1 L1133.5,575.8" fill="none" stroke="#9c9c9c" stroke-width="1.2" stroke-linecap="round" stroke-linejoin="round"/>
<path d="M1122.0,555.1 L1122.0,558.0" fill="none" stroke="#9c9c9c" stroke-width="1.7" stroke-linecap="round" stroke-linejoin="round"/>
<path d="M1006.0,641.3 C1007.1,640.5 1011.5,636.5 1012.9,636.7 C1014.2,636.9 1013.8,641.5 1014.0,642.4" fill="none" stroke="#9c9c9c" stroke-width="1.0" stroke-linecap="round" stroke-linejoin="round"/>
<path d="M680.4,552.9 L680.2,703.4" fill="none" stroke="#9c9c9c" stroke-width="3.2" stroke-linecap="butt" stroke-linejoin="round"/>
<path d="M715.4,552.9 L715.4,600.5" fill="none" stroke="#9c9c9c" stroke-width="3.2" stroke-linecap="butt" stroke-linejoin="round"/>
<path d="M668.0,587.3 C670.9,587.3 680.8,586.5 685.2,587.3 C689.6,588.1 691.2,590.1 694.4,591.9 C697.7,593.7 701.2,596.8 704.7,598.2 C708.2,599.6 710.3,599.7 715.4,600.5 C720.6,601.3 730.4,601.9 735.7,602.8 C741.0,603.7 743.8,604.2 747.2,605.7 C750.7,607.1 753.4,609.5 756.4,611.4 C759.5,613.3 762.3,615.9 765.6,617.2 C768.9,618.4 771.1,618.8 775.9,618.9 C780.7,619.0 788.4,617.9 794.3,617.7 C800.2,617.5 805.8,617.4 811.5,617.7 C817.3,618.1 824.0,619.4 828.8,619.7 C833.5,620.0 836.2,619.7 840.0,619.4 C843.8,619.2 847.9,619.6 851.5,618.3 C855.1,617.0 859.1,614.5 861.8,611.4 C864.5,608.3 865.8,603.2 867.6,599.9 C869.3,596.7 870.3,594.4 872.2,591.9 C874.0,589.4 877.3,587.7 878.5,585.0 C879.6,582.3 879.3,579.1 879.0,575.8 C878.8,572.6 877.7,569.3 876.7,565.5 C875.8,561.7 873.9,555.0 873.3,552.9" fill="none" stroke="#9c9c9c" stroke-width="3.4" stroke-linecap="butt" stroke-linejoin="round"/>
<path d="M725.1,552.9 C725.1,554.6 724.4,560.1 725.1,563.2 C725.7,566.2 727.2,568.4 728.9,571.2 C730.5,574.1 734.0,575.2 735.2,580.4 C736.3,585.6 735.7,598.6 735.7,602.2" fill="none" stroke="#9c9c9c" stroke-width="2.5" stroke-linecap="butt" stroke-linejoin="round"/>
<path d="M775.7,552.9 L775.7,618.3 L776.5,647.6" fill="none" stroke="#9c9c9c" stroke-width="2.8" stroke-linecap="butt" stroke-linejoin="round"/>
<path d="M668.0,699.7 C669.9,700.3 671.4,700.3 679.5,703.4 C687.5,706.5 705.9,715.7 716.2,718.3 C726.6,721.0 731.5,719.1 741.5,719.5 C751.4,719.8 767.1,719.8 775.9,720.4 C784.7,721.0 787.2,722.6 794.3,723.2 C801.4,723.7 812.1,723.0 818.4,723.9 C824.7,724.7 828.6,726.8 832.2,728.1 C835.8,729.4 836.8,731.0 840.0,731.5 C843.2,732.1 847.3,732.6 851.5,731.5 C855.7,730.5 857.6,726.3 865.3,725.2 C872.9,724.2 888.2,725.0 897.4,725.2 C906.6,725.4 914.1,726.4 920.4,726.4 C926.7,726.4 931.7,726.0 935.3,725.2 C938.9,724.5 938.2,724.8 942.2,721.8 C946.2,718.7 951.2,713.9 959.4,706.9 C967.7,699.8 983.3,686.6 991.6,679.3 C999.8,672.0 1005.9,665.9 1008.8,663.2" fill="none" stroke="#9c9c9c" stroke-width="3.0" stroke-linecap="butt" stroke-linejoin="round"/>
<path d="M679.5,703.4 L668.0,720.6" fill="none" stroke="#9c9c9c" stroke-width="3.0" stroke-linecap="butt" stroke-linejoin="round"/>
<path d="M668.0,715.5 L702.4,733.3" fill="none" stroke="#9c9c9c" stroke-width="3.0" stroke-linecap="butt" stroke-linejoin="round"/>
<path d="M716.2,719.5 L709.9,733.3" fill="none" stroke="#9c9c9c" stroke-width="3.0" stroke-linecap="butt" stroke-linejoin="round"/>
<path d="M741.1,663.8 L741.1,737.9" fill="none" stroke="#9c9c9c" stroke-width="3.2" stroke-linecap="butt" stroke-linejoin="round"/>
<path d="M776.5,644.9 C777.3,647.3 780.1,655.2 781.1,659.8 C782.1,664.4 782.2,667.4 782.2,672.4 C782.2,677.4 781.8,684.1 781.1,689.6 C780.4,695.2 779.0,700.7 778.2,705.7 C777.5,710.7 776.8,714.1 776.5,719.5 C776.2,724.8 776.5,734.8 776.5,737.9" fill="none" stroke="#9c9c9c" stroke-width="2.6" stroke-linecap="butt" stroke-linejoin="round"/>
<path d="M862.4,552.9 C871.0,560.7 903.2,589.6 914.1,599.9 C925.0,610.3 920.8,610.5 927.9,614.9 C934.9,619.3 947.0,622.5 956.6,626.3 C966.1,630.2 979.3,634.6 985.3,637.8 C991.2,641.1 988.9,641.6 992.2,645.9 C995.4,650.1 1002.1,659.6 1004.8,663.1 C1007.4,666.5 1007.5,666.0 1008.0,666.5" fill="none" stroke="#9c9c9c" stroke-width="3.2" stroke-linecap="butt" stroke-linejoin="round"/>
<path d="M1006.0,663.2 C1007.9,665.1 1013.7,669.9 1017.5,674.7 C1021.3,679.5 1024.6,685.6 1029.0,691.9 C1033.4,698.2 1039.7,706.9 1043.9,712.6 C1048.1,718.3 1051.4,722.0 1054.2,726.4 C1057.1,730.8 1060.0,736.9 1061.1,739.0" fill="none" stroke="#9c9c9c" stroke-width="3.0" stroke-linecap="butt" stroke-linejoin="round"/>
<path d="M1042.7,737.9 L1051.9,729.8" fill="none" stroke="#9c9c9c" stroke-width="3.0" stroke-linecap="butt" stroke-linejoin="round"/>
<path d="M901.4,552.9 C903.6,556.5 909.7,568.7 914.1,574.7 C918.5,580.6 923.6,585.3 927.9,588.4 C932.1,591.6 933.6,591.5 939.3,593.6 C945.1,595.7 954.7,598.5 962.3,601.1 C970.0,603.7 977.7,606.1 985.3,609.1 C992.9,612.2 1000.7,616.5 1008.0,619.4 C1015.3,622.4 1021.5,623.5 1029.0,626.6 C1036.5,629.6 1044.8,634.0 1053.1,637.8 C1061.4,641.6 1067.6,646.9 1078.9,649.4 C1090.2,652.0 1108.1,652.0 1120.8,652.9 C1133.6,653.8 1145.7,654.7 1155.3,654.7 C1164.8,654.8 1174.2,653.6 1178.0,653.3" fill="none" stroke="#fbfbfb" stroke-width="9.2"/>
<path d="M901.4,552.9 C903.6,556.5 909.7,568.7 914.1,574.7 C918.5,580.6 923.6,585.3 927.9,588.4 C932.1,591.6 933.6,591.5 939.3,593.6 C945.1,595.7 954.7,598.5 962.3,601.1 C970.0,603.7 977.7,606.1 985.3,609.1 C992.9,612.2 1000.7,616.5 1008.0,619.4 C1015.3,622.4 1021.5,623.5 1029.0,626.6 C1036.5,629.6 1044.8,634.0 1053.1,637.8 C1061.4,641.6 1067.6,646.9 1078.9,649.4 C1090.2,652.0 1108.1,652.0 1120.8,652.9 C1133.6,653.8 1145.7,654.7 1155.3,654.7 C1164.8,654.8 1174.2,653.6 1178.0,653.3" fill="none" stroke="#707070" stroke-width="6.1"/>
<rect x="910.0" y="573.6" width="25.2" height="18.4" fill="#888" opacity="0.6"/>
<rect x="909.2" y="572.6" width="25.2" height="18.4" fill="#ffffff" stroke="#5a5a5a" stroke-width="1"/>
<text x="921.8000000000001" y="585.7" font-size="10.5" fill="#3a3a3a" font-weight="bold" text-anchor="middle" >1</text>
<rect x="1054.2" y="634.6" width="25.2" height="19.4" fill="#888" opacity="0.6"/>
<rect x="1053.4" y="633.6" width="25.2" height="19.4" fill="#ffffff" stroke="#5a5a5a" stroke-width="1"/>
<text x="1066.0" y="647.2" font-size="10.5" fill="#3a3a3a" font-weight="bold" text-anchor="middle" >1</text>
<circle cx="915.8" cy="626.9" r="5.8" fill="#2fd863"/>
<path d="M913.6,626.9 L915.8,624.7 L918.0,626.9 L915.8,629.1Z" fill="#2c8a55"/>
</g>
<rect x="669.5" y="555.5" width="507.5" height="181.3" fill="none" stroke="#7e8a99" stroke-width="1"/>
<rect x="826.0" y="746.5" width="1" height="22.0" fill="#d4d4d4"/>
<rect x="912.1" y="746.5" width="1" height="22.0" fill="#d4d4d4"/>
<rect x="933.7" y="746.5" width="1" height="22.0" fill="#d4d4d4"/>
<rect x="1009.3" y="746.5" width="1" height="22.0" fill="#d4d4d4"/>
<rect x="1140.0" y="746.5" width="1" height="22.0" fill="#d4d4d4"/>
<text x="812.2" y="762" font-size="12" fill="#000" textLength="10.2" lengthAdjust="spacingAndGlyphs" >X:</text>
<text x="831.2" y="762" font-size="12" fill="#000" textLength="79.3" lengthAdjust="spacingAndGlyphs" >-13692595.5481</text>
<text x="920" y="762" font-size="12" fill="#000" textLength="10" lengthAdjust="spacingAndGlyphs" >Y:</text>
<text x="939" y="762" font-size="12" fill="#000" textLength="69" lengthAdjust="spacingAndGlyphs" >6316661.0732</text>
<text x="1013.8" y="762" font-size="12" fill="#000" textLength="125" lengthAdjust="spacingAndGlyphs" >SPHERICAL_MERCATOR</text>
<text x="1144.6" y="762" font-size="12" fill="#000" textLength="36.8" lengthAdjust="spacingAndGlyphs" >METER</text>
<rect x="35.5" y="774.6" width="1151.5" height="1.2" fill="#c6c6c6"/>
<rect x="2.5" y="776.4" width="100" height="24" fill="#fafafa"/>
<rect x="102.0" y="776.4" width="1" height="23.600000000000023" fill="#dadada"/>
<rect x="103" y="776.8" width="100" height="22" fill="#f3f3f3"/>
<rect x="202.5" y="777" width="1" height="22" fill="#e6e6e6"/>
<text x="14" y="793.2" font-size="12" fill="#000" textLength="75" lengthAdjust="spacingAndGlyphs" >Visual Preview</text>
<text x="113.6" y="792.4" font-size="12" fill="#000" textLength="79.3" lengthAdjust="spacingAndGlyphs" >Translation Log</text>
<rect x="1191" y="462.5" width="430" height="20" fill="#d9d9d9" stroke="#b4b4b4" stroke-width="1"/>
<text x="1195.7" y="477.5" font-size="12" fill="#000" textLength="104.8" lengthAdjust="spacingAndGlyphs" >Feature Information</text>
<path d="M1585.3,468.9 h5.3 v4.6 h-1.4 M1585.3,468.9 v1.6" fill="none" stroke="#222" stroke-width="1.3"/>
<rect x="1583" y="471.3" width="5.2" height="4.6" fill="none" stroke="#222" stroke-width="1.3"/>
<path d="M1604,469.8 l6.6,6.6 M1610.6,469.8 l-6.6,6.6" stroke="#222" stroke-width="1.7"/>
<rect x="1200.3" y="494.5" width="409.7" height="268" fill="#ffffff" stroke="#828790" stroke-width="1"/>
<rect x="1592.3" y="495" width="17.2" height="267" fill="#f0f0f0"/>
<rect x="1200.8" y="745.2" width="408.7" height="16.8" fill="#f0f0f0"/>
<rect x="1600.2" y="511.7" width="2" height="111.6" fill="#7a7a7a"/>
<rect x="1218.3" y="752.8" width="339.4" height="2" fill="#7a7a7a"/>
<rect x="1364.2" y="495" width="1" height="24" fill="#e0e0e0"/>
<text x="1205" y="511.8" font-size="12" fill="#000" textLength="45" lengthAdjust="spacingAndGlyphs" >Property</text>
<text x="1368.7" y="511.8" font-size="12" fill="#000" textLength="28.8" lengthAdjust="spacingAndGlyphs" >Value</text>
<clipPath id="fi"><rect x="1201" y="495" width="391.3" height="250.2"/></clipPath><g clip-path="url(#fi)">
<text x="1224.2" y="532.7" font-size="12" fill="#000" textLength="66.3" lengthAdjust="spacingAndGlyphs" >Feature Type</text>
<text x="1368.3" y="532.7" font-size="12" fill="#000" textLength="67.8" lengthAdjust="spacingAndGlyphs" >Work_Orders</text>
<rect x="1220.9" y="537.2" width="371.39999999999986" height="17.6" fill="#e9e8e5"/>
<text x="1224.2" y="550.7" font-size="12" fill="#000" textLength="99.6" lengthAdjust="spacingAndGlyphs" >Coordinate System</text>
<text x="1368.3" y="550.7" font-size="12" fill="#0000ee" textLength="125" lengthAdjust="spacingAndGlyphs" >SPHERICAL_MERCATOR</text>
<rect x="1368.3" y="552.0" width="125.0" height="1" fill="#0000ee"/>
<text x="1224.2" y="568.7" font-size="12" fill="#000" textLength="56.5" lengthAdjust="spacingAndGlyphs" >Dimension</text>
<text x="1368.3" y="568.7" font-size="12" fill="#000" textLength="13.5" lengthAdjust="spacingAndGlyphs" >2D</text>
<rect x="1220.9" y="573.2" width="371.39999999999986" height="17.6" fill="#e9e8e5"/>
<text x="1224.2" y="586.7" font-size="12" fill="#000" textLength="101" lengthAdjust="spacingAndGlyphs" >Number of Vertices</text>
<text x="1368.3" y="586.7" font-size="12" fill="#000" textLength="5.2" lengthAdjust="spacingAndGlyphs" >1</text>
<text x="1224.2" y="604.7" font-size="12" fill="#000" textLength="61.8" lengthAdjust="spacingAndGlyphs" >Min Extents</text>
<text x="1368.3" y="604.7" font-size="12" fill="#000" textLength="185" lengthAdjust="spacingAndGlyphs" >-13688735.3452, 6315524.898199998</text>
<rect x="1220.9" y="609.2" width="371.39999999999986" height="17.6" fill="#e9e8e5"/>
<text x="1224.2" y="622.7" font-size="12" fill="#000" textLength="63.6" lengthAdjust="spacingAndGlyphs" >Max Extents</text>
<text x="1368.3" y="622.7" font-size="12" fill="#000" textLength="185" lengthAdjust="spacingAndGlyphs" >-13688735.3452, 6315524.898199998</text>
<text x="1224.2" y="640.7" font-size="12" fill="#000" textLength="81.8" lengthAdjust="spacingAndGlyphs" font-weight="bold" >Attributes (14)</text>
<path d="M1207,633.2 L1210.6,636.8 L1214.2,633.2" fill="none" stroke="#222" stroke-width="1.3"/>
<rect x="1240.9" y="645.2" width="351.39999999999986" height="17.6" fill="#e9e8e5"/>
<text x="1244.2" y="658.7" font-size="12" fill="#000" textLength="114.8" lengthAdjust="spacingAndGlyphs" >Asignee_Email (strin...</text>
<text x="1368.3" y="658.7" font-size="12" fill="#000" textLength="114" lengthAdjust="spacingAndGlyphs" >enunez@safeville.gov</text>
<text x="1244.2" y="676.7" font-size="12" fill="#000" textLength="85.8" lengthAdjust="spacingAndGlyphs" >Assignee (strin...</text>
<text x="1368.3" y="676.7" font-size="12" fill="#000" textLength="56.6" lengthAdjust="spacingAndGlyphs" >Erin Nunez</text>
<rect x="1240.9" y="681.2" width="351.39999999999986" height="17.6" fill="#e9e8e5"/>
<text x="1244.2" y="694.7" font-size="12" fill="#000" textLength="111.6" lengthAdjust="spacingAndGlyphs" >Damage_Type (strin...</text>
<text x="1368.3" y="694.7" font-size="12" fill="#000" textLength="24.6" lengthAdjust="spacingAndGlyphs" >TREE</text>
<text x="1244.2" y="712.7" font-size="12" fill="#000" textLength="80.6" lengthAdjust="spacingAndGlyphs" >db_type (strin...</text>
<text x="1368.3" y="712.7" font-size="12" fill="#000" textLength="46.5" lengthAdjust="spacingAndGlyphs" >db_point</text>
<rect x="1240.9" y="717.2" width="351.39999999999986" height="17.6" fill="#e9e8e5"/>
<text x="1244.2" y="730.7" font-size="12" fill="#000" textLength="101.7" lengthAdjust="spacingAndGlyphs" >Department (strin...</text>
<text x="1368.3" y="730.7" font-size="12" fill="#000" textLength="74" lengthAdjust="spacingAndGlyphs" >urban forestry</text>
<text x="1244.2" y="748.7" font-size="12" fill="#000" textLength="103" lengthAdjust="spacingAndGlyphs" >Description (strin...</text>
<text x="1368.3" y="748.7" font-size="12" fill="#000" textLength="229" lengthAdjust="spacingAndGlyphs" >A large branch has fallen off a pine tree and</text>
</g>
<text x="1421.2" y="785" font-size="12" fill="#000" textLength="93.8" lengthAdjust="spacingAndGlyphs" >Features Selected:</text>
<rect x="1521.8" y="769.5" width="9.6" height="20.5" fill="#ffffff"/>
<rect x="1521.8" y="789.6" width="9.6" height="1" fill="#8a8a8a"/>
<text x="1523.8" y="785" font-size="12" fill="#000" textLength="5.2" lengthAdjust="spacingAndGlyphs" >1</text>
<text x="1538.3" y="785" font-size="12" fill="#000" textLength="19.2" lengthAdjust="spacingAndGlyphs" >of 1</text>
<path d="M1577.3,776.6 L1573,780.4 L1577.3,784.2Z" fill="#555"/>
<path d="M1595.6,776.6 L1599.9,780.4 L1595.6,784.2Z" fill="#555"/>
<rect x="0" y="799.5" width="1615" height="1.5" fill="#5a5a5a"/>
</svg></body></html>
